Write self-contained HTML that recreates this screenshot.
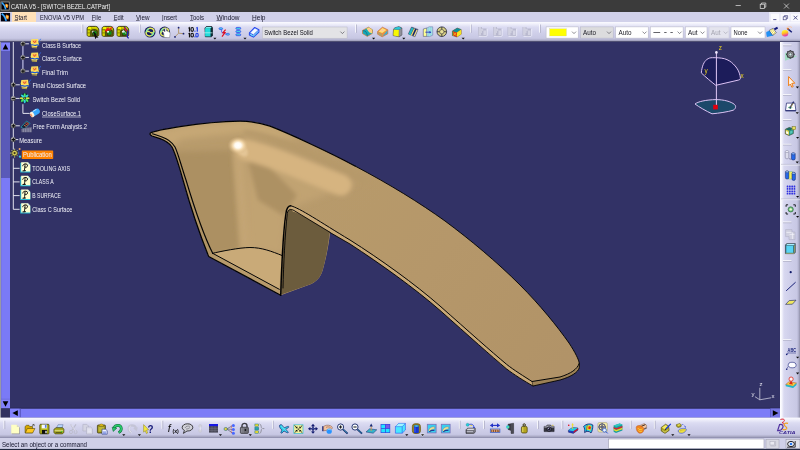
<!DOCTYPE html>
<html>
<head>
<meta charset="utf-8">
<title>CATIA V5 - [SWITCH BEZEL.CATPart]</title>
<style>
*{margin:0;padding:0}
html,body{width:800px;height:450px;overflow:hidden;background:#333366;font-family:"Liberation Sans",sans-serif}
svg{display:block;position:absolute;left:0;top:0}
text{font-family:"Liberation Sans",sans-serif;white-space:pre}
</style>
</head>
<body>
<svg width="800" height="450" viewBox="0 0 800 450">
<defs>
<filter id="soft" x="-2%" y="-2%" width="104%" height="104%"><feGaussianBlur stdDeviation="0.32"/></filter>
<linearGradient id="tbg" x1="0" y1="0" x2="0" y2="1"><stop offset="0" stop-color="#fbfbff"/><stop offset="0.1" stop-color="#f0f0fb"/><stop offset="0.26" stop-color="#dcdcf2"/><stop offset="0.5" stop-color="#d1d1eb"/><stop offset="0.84" stop-color="#c7c7e3"/><stop offset="0.93" stop-color="#b0b0cc"/><stop offset="1" stop-color="#9090a8"/></linearGradient>
<linearGradient id="rbg" x1="0" y1="0" x2="1" y2="0"><stop offset="0" stop-color="#ffffff"/><stop offset="0.08" stop-color="#f6f6fd"/><stop offset="0.2" stop-color="#d8d8f0"/><stop offset="0.5" stop-color="#cfcfea"/><stop offset="0.85" stop-color="#c8c8e4"/><stop offset="0.94" stop-color="#acacc8"/><stop offset="1" stop-color="#9090a8"/></linearGradient>
<linearGradient id="ybox" x1="0" y1="0" x2="0" y2="1"><stop offset="0" stop-color="#f4f400"/><stop offset="1" stop-color="#b4b400"/></linearGradient>
<linearGradient id="ball" x1="0.3" y1="0" x2="0.6" y2="1"><stop offset="0" stop-color="#ffff30"/><stop offset="0.45" stop-color="#ffc020"/><stop offset="0.75" stop-color="#f06080"/><stop offset="1" stop-color="#d820d0"/></linearGradient>
</defs>
<g filter="url(#soft)">
<rect x="0" y="0" width="800" height="12" fill="#3a3a3a"/>
<rect x="0" y="12" width="800" height="10.5" fill="#d1d1ea"/>
<rect x="769" y="12" width="31" height="10.5" fill="#ececf8"/>
<rect x="12" y="12" width="24" height="10" fill="#ffe1b8"/>
<rect x="0" y="22" width="800" height="19.4" fill="url(#tbg)"/>
<rect x="0" y="41.2" width="800" height="1" fill="#505070"/>
<rect x="0" y="42" width="780" height="367" fill="#333366"/>
<g id="model"><defs>
<filter id="bl3" x="-20%" y="-20%" width="140%" height="140%"><feGaussianBlur stdDeviation="3"/></filter>
<filter id="bl2" x="-20%" y="-20%" width="140%" height="140%"><feGaussianBlur stdDeviation="2.2"/></filter>
<filter id="bl1" x="-50%" y="-50%" width="200%" height="200%"><feGaussianBlur stdDeviation="1.2"/></filter>
<clipPath id="sil"><path d="M150.4,133 C153,131.5 170,128.2 180,126.6 C200,123.6 220,121.6 240,121.2 C252,121.2 262,123.2 270,126.2 C290,134 330,152.5 355,166 C390,184.5 420,203 445,221 C470,239.5 497,262 520,285 C540,305 557,326 569,343 C575,352 579,360 579.3,363.5 L579.3,367.8 C578,372 572,376.5 560,380 L533,386 C525,381.5 513,374 506.7,369 C490,355 470,337 440,310.4 C415,288.5 380,263.5 350,244 L330,232.5 C329,245 325,262 323.3,268 C321.5,275 319,280 311.3,284 L280.7,295.2 L208.7,256.5 C202,240 190,205 183,180 C179,166 176,155 172,147 C169,142.5 164,140 160,138.6 L152,136 C150,135 149.6,134 150.4,133 Z"/></clipPath>
<radialGradient id="hl" cx="0.5" cy="0.5" r="0.5"><stop offset="0" stop-color="#ffffff"/><stop offset="0.3" stop-color="#fffaf0"/><stop offset="0.55" stop-color="#f4d8aa" stop-opacity="0.9"/><stop offset="1" stop-color="#d2b07c" stop-opacity="0"/></radialGradient>
<linearGradient id="strip" gradientUnits="userSpaceOnUse" x1="300" y1="170" x2="560" y2="370"><stop offset="0" stop-color="#b89b6c"/><stop offset="0.5" stop-color="#b5976a"/><stop offset="1" stop-color="#b19367"/></linearGradient>
</defs>
<g clip-path="url(#sil)">
<rect x="140" y="110" width="450" height="290" fill="url(#strip)"/>
<g filter="url(#bl3)">
<!-- flange band lighter -->
<path d="M150,133 L180,126 L240,120.5 L266,123 L285,131 L300,141 L262,136 L240,133 L182,139 L172,146 Z" fill="#c6a775"/>
<!-- left wall -->
<path d="M170,152 L234,150 L240,250 L209,256 Z" fill="#ac9062"/>
<!-- back wall lighter -->
<path d="M246,150 L300,165 L357,183 L292,207 L285,216 L283,254 L246,250 Z" fill="#c1a372"/>
</g>
<g filter="url(#bl2)">
<!-- dark diagonal -->
<path d="M246,154 L258,156 L297,195 L288,209 L284,216 L258,200 Z" fill="#ad9164"/>
<!-- vertical fillet band -->
<path d="M238,150 L246,250" stroke="#c3a473" stroke-width="11" fill="none"/>
<!-- dark band under flange -->
<path d="M246,132.5 C262,134.5 280,141 300,149.5 C320,158.5 345,170.5 366,182" stroke="#b6996a" stroke-width="5" fill="none" stroke-linecap="round"/>
<!-- bright fillet band -->
<path d="M246,150 C259,153 279,160 300,168.5 C316,175 330,180.5 341,185" stroke="#d6b480" stroke-width="21" fill="none" stroke-linecap="round"/>
</g>
<!-- floor -->
<path d="M212.7,253.3 C220,251.5 240,247.5 250,247.5 C262,247.5 272,251.5 282,255.5 L279.3,289.3 Z" fill="#c9aa78"/>
<!-- thickness of left/bottom walls -->
<!-- dark side wall -->
<path d="M287.3,213.3 C288,209 291,208.8 294,210.5 L330,232 L329.2,236 C328,248 325,262 323.3,268 C321.5,275 319,280 311.3,284 L280.7,294.7 C281.5,270 283.5,235 287.3,213.3 Z" fill="#6c5b3d"/>
<!-- strip thickness band (side) -->
<path d="M290,205.9 C300,208 320,222 350,240 C380,259 415,284 440,306 C470,332.5 490,350.5 506.7,364.4 C513,369.5 525,377 532,381.5 L533,386 C525,381.5 513,374 506.7,369 C490,355 470,337 440,310.4 C415,288.5 380,263.5 350,244 C320,226 300,213 292.7,211.5 Z" fill="#c9a978"/>
<!-- tip front band -->
<path d="M532,381.5 L560,377 C571,373.5 577,369.5 579.2,363.5 L579.3,367.8 C578,372 572,376.5 560,380 L533,386 Z" fill="#9c8156"/>
<ellipse cx="241" cy="149" rx="9" ry="5" fill="#f0d4a8" opacity="0.55" transform="rotate(50 241 149)" filter="url(#bl1)"/><ellipse cx="238" cy="145.4" rx="10.5" ry="9" fill="url(#hl)"/>
</g>
<!-- outlines -->
<g fill="none" stroke="#050505" stroke-width="1" stroke-linejoin="round" stroke-linecap="round">
<path d="M280.7,295.2 L208.7,256.5 C202,240 190,205 183,180 C179,166 176,155 172,147 C169,142.5 164,140 160,138.6 L152,136 C150,135 149.6,134 150.4,133 C153,131.5 170,128.2 180,126.6 C200,123.6 220,121.6 240,121.2 C252,121.2 262,123.2 270,126.2 C290,134 330,152.5 355,166" stroke-width="1.25"/>
<path d="M355,166 C390,184.5 420,203 445,221 C470,239.5 497,262 520,285 C540,305 557,326 569,343 C575,352 579,360 579.3,363.5 L579.3,367.8 C578,372 572,376.5 560,380 L533,386 C525,381.5 513,374 506.7,369 C490,355 470,337 440,310.4 C415,288.5 380,263.5 350,244 L330,232.5" stroke-width="0.95"/>
<!-- inner left lip line -->
<path d="M152.5,133.8 C155,134.5 159,136 162,137 C166,138.3 171,140.5 175,147 C178,153 181,165 186,180 C192,200 204,236 212.7,253.3" stroke-width="1.15"/>
<!-- floor back edge -->
<path d="M212.7,253.3 C220,251.5 240,247.5 250,247.5 C262,247.5 272,251.5 282,255.5"/>
<!-- bottom inner edge -->
<path d="M212.7,253.3 L279.3,289.3"/>
<!-- right wall near-vertical lines -->
<path d="M280.7,295.2 C281.5,270 283,232 286,213 C286.6,208.5 288,206 290.5,205.7" stroke-width="1.5"/>
<path d="M283,288 C283.5,265 285,235 287.3,213.3 C288,209 291,208.8 294,210.5 L330,232.3" stroke-width="0.9"/>
<!-- strip top-face lower edge -->
<path d="M290.5,205.7 C300,208 320,222 350,240 C380,259 415,284 440,306 C470,332.5 490,350.5 506.7,364.4 C513,369.5 525,377 532,381.5 L560,377 C571,373.5 577,369.5 579.2,363.5"/>
<path d="M532,381.5 L533,386" stroke-width="0.5"/>
</g>
</g>
<rect x="0" y="41.8" width="1.1" height="376.2" fill="#9898a6"/>
<rect x="1.1" y="42.4" width="8.9" height="136" fill="#5a5ab8"/>
<rect x="1.1" y="42.6" width="8.9" height="8.2" fill="#8282fc"/>
<path d="M2.7,49.4 L8.3,49.4 L5.5,44 Z" fill="#000"/>
<rect x="1.1" y="178" width="8.9" height="221" fill="#7a7af6"/>
<rect x="1.1" y="399" width="8.9" height="9.3" fill="#8282fc"/>
<rect x="1.1" y="398.8" width="8.9" height="0.7" fill="#6464d0"/>
<path d="M2.7,401.2 L8.3,401.2 L5.5,406.8 Z" fill="#000"/>
<rect x="1.1" y="408.5" width="8.7" height="9.3" fill="#33335f"/>
<rect x="10" y="408.5" width="770" height="9.2" fill="#7b7bf7"/>
<rect x="10" y="407.7" width="770" height="0.8" fill="#2a2a58"/>
<rect x="10.2" y="408.7" width="9.4" height="8.8" fill="#8282fc"/>
<rect x="19.8" y="408.5" width="0.9" height="9.2" fill="#5252b4"/>
<path d="M17.8,410.2 L17.8,416 L12.4,413.1 Z" fill="#000"/>
<rect x="770.8" y="408.5" width="9.2" height="9.2" fill="#7474e4"/>
<rect x="770.2" y="408.5" width="0.8" height="9.2" fill="#5c5cc4"/>
<path d="M772.8,410.2 L772.8,416 L778.4,413.1 Z" fill="#000"/>
<rect x="780" y="42" width="20" height="376" fill="url(#rbg)"/>
<rect x="0" y="417.6" width="800" height="20" fill="url(#tbg)"/>
<rect x="0" y="437.6" width="800" height="12.4" fill="#d0d0e8"/>
<rect x="608.5" y="439" width="155.5" height="9.6" fill="#ffffff" stroke="#9a9aae" stroke-width="0.6"/>
<rect x="766" y="439.3" width="13" height="9" fill="#d8d8e2" stroke="#a0a0b0" stroke-width="0.5"/>
<rect x="786" y="439.3" width="14" height="9" fill="#e0e0ea" stroke="#8c8ca0" stroke-width="0.5"/>
<g font-family="Liberation Sans, sans-serif">
<text x="11" y="8.6" font-size="7.3" fill="#f2f2f2" textLength="99" lengthAdjust="spacingAndGlyphs" >CATIA V5 - [SWITCH BEZEL.CATPart]</text>
<text x="14.5" y="19.6" font-size="6.9" fill="#18182c" textLength="12.5" lengthAdjust="spacingAndGlyphs" >Start</text>
<rect x="14.5" y="20.5" width="3.4" height="0.5" fill="#18182c"/>
<text x="40" y="19.6" font-size="6.9" fill="#18182c" textLength="44" lengthAdjust="spacingAndGlyphs" >ENOVIA V5 VPM</text>
<text x="91.7" y="19.6" font-size="6.9" fill="#18182c" textLength="9.5" lengthAdjust="spacingAndGlyphs" >File</text>
<rect x="91.7" y="20.5" width="3.0" height="0.5" fill="#18182c"/>
<text x="113.7" y="19.6" font-size="6.9" fill="#18182c" textLength="10" lengthAdjust="spacingAndGlyphs" >Edit</text>
<rect x="113.7" y="20.5" width="3.2" height="0.5" fill="#18182c"/>
<text x="136" y="19.6" font-size="6.9" fill="#18182c" textLength="13.5" lengthAdjust="spacingAndGlyphs" >View</text>
<rect x="136" y="20.5" width="3.6" height="0.5" fill="#18182c"/>
<text x="162" y="19.6" font-size="6.9" fill="#18182c" textLength="15" lengthAdjust="spacingAndGlyphs" >Insert</text>
<rect x="162" y="20.5" width="1.2" height="0.5" fill="#18182c"/>
<text x="190" y="19.6" font-size="6.9" fill="#18182c" textLength="14" lengthAdjust="spacingAndGlyphs" >Tools</text>
<rect x="190" y="20.5" width="3.2" height="0.5" fill="#18182c"/>
<text x="216.5" y="19.6" font-size="6.9" fill="#18182c" textLength="23" lengthAdjust="spacingAndGlyphs" >Window</text>
<rect x="216.5" y="20.5" width="5.2" height="0.5" fill="#18182c"/>
<text x="252" y="19.6" font-size="6.9" fill="#18182c" textLength="13.5" lengthAdjust="spacingAndGlyphs" >Help</text>
<rect x="252" y="20.5" width="3.8" height="0.5" fill="#18182c"/>
<text x="2" y="446.6" font-size="6.6" fill="#15152c" textLength="85" lengthAdjust="spacingAndGlyphs" >Select an object or a command</text>
</g>
<g><rect x="1" y="2" width="8.2" height="8" fill="#060608" stroke="#c8c8c8" stroke-width="0.6"/><g transform="translate(1,2) scale(0.911111111111111,0.8888888888888888)">
<path d="M5.4,1.6 C6.4,2.4 7.6,2.2 8,3.4 C8.2,4.6 7.2,5.6 7.6,6.6 C6.4,6.8 5.2,6.2 4.6,5 C4.2,3.8 4.6,2.4 5.4,1.6 Z" fill="#f07818"/>
<path d="M5.6,2.6 C6.4,3 7,3.2 7.2,4 C7.2,4.8 6.6,5.4 6.4,6 C5.6,5.6 5.2,4.8 5.2,4 Z" fill="#ffd860"/>
<path d="M0.8,0.8 C2.6,2 4.2,4 5.2,8.4" stroke="#1c8cf0" stroke-width="1.7" fill="none"/>
<path d="M1.2,1 C2.8,2.2 4.2,4.2 5,7.6" stroke="#70d0ff" stroke-width="0.6" fill="none"/>
</g></g>
<g><rect x="0.8" y="13" width="9.3" height="8.4" fill="#060608"/><g transform="translate(0.8,13) scale(1.0333333333333334,0.9333333333333333)">
<path d="M5.4,1.6 C6.4,2.4 7.6,2.2 8,3.4 C8.2,4.6 7.2,5.6 7.6,6.6 C6.4,6.8 5.2,6.2 4.6,5 C4.2,3.8 4.6,2.4 5.4,1.6 Z" fill="#f07818"/>
<path d="M5.6,2.6 C6.4,3 7,3.2 7.2,4 C7.2,4.8 6.6,5.4 6.4,6 C5.6,5.6 5.2,4.8 5.2,4 Z" fill="#ffd860"/>
<path d="M0.8,0.8 C2.6,2 4.2,4 5.2,8.4" stroke="#1c8cf0" stroke-width="1.7" fill="none"/>
<path d="M1.2,1 C2.8,2.2 4.2,4.2 5,7.6" stroke="#70d0ff" stroke-width="0.6" fill="none"/>
</g></g>
<g stroke="#e8e8e8" stroke-width="0.7" fill="none">
<path d="M735.6,5.5 L740.8,5.5"/>
<rect x="760.2" y="4.2" width="4.3" height="4.3"/><path d="M761.5,4.2 L761.5,3 L765.8,3 L765.8,7.2 L764.5,7.2"/>
<path d="M784,3.6 L788.9,8.5 M788.9,3.6 L784,8.5"/>
</g>
<g stroke="#484884" stroke-width="0.7" fill="none">
<rect x="770.8" y="13.8" width="8.2" height="7.6" fill="#fafafe" stroke="none"/>
<rect x="780.8" y="13.8" width="8.6" height="7.6" fill="#fafafe" stroke="none"/>
<rect x="791" y="13.8" width="9" height="7.6" fill="#fafafe" stroke="none"/>
<path d="M773.2,19.6 L776.4,19.6" stroke-width="0.9"/>
<rect x="783.2" y="16.8" width="3" height="3"/><path d="M784.4,16.8 L784.4,15.6 L787.6,15.6 L787.6,18.6 L786.2,18.6"/>
<path d="M793.6,15.8 L797.4,19.6 M797.4,15.8 L793.6,19.6" stroke-width="0.9"/>
</g>
<g id="tree"><defs><radialGradient id="nodeg" cx="0.35" cy="0.3" r="0.8"><stop offset="0" stop-color="#c4c4c4"/><stop offset="0.6" stop-color="#7c7c7c"/><stop offset="1" stop-color="#3c3c3c"/></radialGradient></defs>
<path d="M13.3,42 L13.3,149.5" stroke="#f4f4fc" stroke-width="0.9" fill="none"/>
<path d="M22.9,42 L22.9,72.6" stroke="#b4b4dc" stroke-width="1.3" fill="none"/>
<path d="M13.3,158.5 L13.3,209.3 L19.6,209.3 M13.3,168.3 L19.6,168.3 M13.3,181.9 L19.6,181.9 M13.3,195.6 L19.6,195.6" stroke="#f4f4fc" stroke-width="0.9" fill="none"/>
<path d="M22.9,104.2 L22.9,113.4 L29.6,113.4" stroke="#f4f4fc" stroke-width="0.9" fill="none"/>
<path d="M22.9,43.8 L28.9,43.8" stroke="#f4f4fc" stroke-width="0.9"/><circle cx="22.9" cy="43.8" r="2.5" fill="url(#nodeg)"/><path d="M21.2,43.8 L24.599999999999998,43.8" stroke="#050505" stroke-width="1"/><path d="M22.9,42.099999999999994 L22.9,45.5" stroke="#050505" stroke-width="1"/>
<path d="M22.9,57.4 L28.9,57.4" stroke="#f4f4fc" stroke-width="0.9"/><circle cx="22.9" cy="57.4" r="2.5" fill="url(#nodeg)"/><path d="M21.2,57.4 L24.599999999999998,57.4" stroke="#050505" stroke-width="1"/><path d="M22.9,55.699999999999996 L22.9,59.1" stroke="#050505" stroke-width="1"/>
<path d="M22.9,71.1 L28.9,71.1" stroke="#f4f4fc" stroke-width="0.9"/><circle cx="22.9" cy="71.1" r="2.5" fill="url(#nodeg)"/><path d="M21.2,71.1 L24.599999999999998,71.1" stroke="#050505" stroke-width="1"/><path d="M22.9,69.39999999999999 L22.9,72.8" stroke="#050505" stroke-width="1"/>
<path d="M13.3,84.8 L19.8,84.8" stroke="#f4f4fc" stroke-width="0.9"/><circle cx="13.3" cy="84.8" r="2.5" fill="url(#nodeg)"/><path d="M11.600000000000001,84.8 L15.0,84.8" stroke="#050505" stroke-width="1"/><path d="M13.3,83.1 L13.3,86.5" stroke="#050505" stroke-width="1"/>
<path d="M13.3,98.4 L19.8,98.4" stroke="#f4f4fc" stroke-width="0.9"/><circle cx="13.3" cy="98.4" r="2.5" fill="url(#nodeg)"/><path d="M11.600000000000001,98.4 L15.0,98.4" stroke="#050505" stroke-width="1"/>
<path d="M13.3,125.8 L19.8,125.8" stroke="#f4f4fc" stroke-width="0.9"/><circle cx="13.3" cy="125.8" r="2.5" fill="url(#nodeg)"/><path d="M11.600000000000001,125.8 L15.0,125.8" stroke="#050505" stroke-width="1"/><path d="M13.3,124.1 L13.3,127.5" stroke="#050505" stroke-width="1"/>
<path d="M13.3,139.60000000000002 L18.3,139.60000000000002" stroke="#f4f4fc" stroke-width="0.9"/><circle cx="13.3" cy="139.60000000000002" r="2.5" fill="url(#nodeg)"/><path d="M11.600000000000001,139.60000000000002 L15.0,139.60000000000002" stroke="#050505" stroke-width="1"/><path d="M13.3,137.90000000000003 L13.3,141.3" stroke="#050505" stroke-width="1"/>
<g transform="translate(30.4,38.599999999999994)">
<path d="M1,0.6 L7.6,0.3 L8.4,5.6 L6.4,8.6 L1.2,8.2 L0.3,4 Z" fill="#ffe45c"/>
<path d="M1.8,1.4 L6.2,1.2 L6.8,4.2 L2.6,5 Z" fill="#f8b458" opacity="0.9"/>
<path d="M2.6,2.6 L4.4,3.8 M5.6,2 L4.2,4.4" stroke="#e03018" stroke-width="0.7"/>
<path d="M0.2,6.6 C2,5 3.6,7.6 5.4,6.6 C6.8,5.8 7.8,6.4 8.8,7" stroke="#1c58d0" stroke-width="1.2" fill="none"/>
<path d="M1.4,8.9 L6.6,9.3" stroke="#d8c040" stroke-width="0.8"/>
<path d="M8.6,3 L10.3,0.2 M8.6,3 L9.8,4.2" stroke="#2c6ce8" stroke-width="0.8" fill="none"/>
</g>
<g transform="translate(30.4,52.199999999999996)">
<path d="M1,0.6 L7.6,0.3 L8.4,5.6 L6.4,8.6 L1.2,8.2 L0.3,4 Z" fill="#ffe45c"/>
<path d="M1.8,1.4 L6.2,1.2 L6.8,4.2 L2.6,5 Z" fill="#f8b458" opacity="0.9"/>
<path d="M2.6,2.6 L4.4,3.8 M5.6,2 L4.2,4.4" stroke="#e03018" stroke-width="0.7"/>
<path d="M0.2,6.6 C2,5 3.6,7.6 5.4,6.6 C6.8,5.8 7.8,6.4 8.8,7" stroke="#1c58d0" stroke-width="1.2" fill="none"/>
<path d="M1.4,8.9 L6.6,9.3" stroke="#d8c040" stroke-width="0.8"/>
<path d="M8.6,3 L10.3,0.2 M8.6,3 L9.8,4.2" stroke="#2c6ce8" stroke-width="0.8" fill="none"/>
</g>
<g transform="translate(30.4,65.89999999999999)">
<path d="M1,0.6 L7.6,0.3 L8.4,5.6 L6.4,8.6 L1.2,8.2 L0.3,4 Z" fill="#ffe45c"/>
<path d="M1.8,1.4 L6.2,1.2 L6.8,4.2 L2.6,5 Z" fill="#f8b458" opacity="0.9"/>
<path d="M2.6,2.6 L4.4,3.8 M5.6,2 L4.2,4.4" stroke="#e03018" stroke-width="0.7"/>
<path d="M0.2,6.6 C2,5 3.6,7.6 5.4,6.6 C6.8,5.8 7.8,6.4 8.8,7" stroke="#1c58d0" stroke-width="1.2" fill="none"/>
<path d="M1.4,8.9 L6.6,9.3" stroke="#d8c040" stroke-width="0.8"/>
<path d="M8.6,3 L10.3,0.2 M8.6,3 L9.8,4.2" stroke="#2c6ce8" stroke-width="0.8" fill="none"/>
</g>
<g transform="translate(20.4,79.39999999999999)">
<path d="M1,0.6 L7.6,0.3 L8.4,5.6 L6.4,8.6 L1.2,8.2 L0.3,4 Z" fill="#ffe45c"/>
<path d="M1.8,1.4 L6.2,1.2 L6.8,4.2 L2.6,5 Z" fill="#f8b458" opacity="0.9"/>
<path d="M2.6,2.6 L4.4,3.8 M5.6,2 L4.2,4.4" stroke="#e03018" stroke-width="0.7"/>
<path d="M0.2,6.6 C2,5 3.6,7.6 5.4,6.6 C6.8,5.8 7.8,6.4 8.8,7" stroke="#1c58d0" stroke-width="1.2" fill="none"/>
<path d="M1.4,8.9 L6.6,9.3" stroke="#d8c040" stroke-width="0.8"/>
<path d="M8.6,3 L10.3,0.2 M8.6,3 L9.8,4.2" stroke="#2c6ce8" stroke-width="0.8" fill="none"/>
</g>
<g transform="translate(24.7,98.2)"><circle r="4.9" fill="#0c2c30"/><ellipse cx="0" cy="-3" rx="1.05" ry="2" fill="#48e860" transform="rotate(0)"/><ellipse cx="0" cy="-3" rx="1.05" ry="2" fill="#30d0e0" transform="rotate(45)"/><ellipse cx="0" cy="-3" rx="1.05" ry="2" fill="#d4e444" transform="rotate(90)"/><ellipse cx="0" cy="-3" rx="1.05" ry="2" fill="#48e860" transform="rotate(135)"/><ellipse cx="0" cy="-3" rx="1.05" ry="2" fill="#30d0e0" transform="rotate(180)"/><ellipse cx="0" cy="-3" rx="1.05" ry="2" fill="#48e860" transform="rotate(225)"/><ellipse cx="0" cy="-3" rx="1.05" ry="2" fill="#d4e444" transform="rotate(270)"/><ellipse cx="0" cy="-3" rx="1.05" ry="2" fill="#30d0e0" transform="rotate(315)"/><circle r="1.2" fill="#283c20"/><circle r="0.6" fill="#e8d040"/></g>
<g transform="translate(35,112.7) rotate(-32)">
<rect x="-5.2" y="-2.7" width="10.4" height="5.4" rx="2.7" fill="#38a8ff"/>
<rect x="-5.2" y="-2.7" width="3.6" height="5.4" rx="1.6" fill="#fff4e0"/>
<rect x="-5.4" y="-1.4" width="1.6" height="3.2" fill="#f09060"/>
<path d="M-1,-2.2 L3,-2.2" stroke="#b8e0ff" stroke-width="0.9"/>
</g>
<g transform="translate(20.3,120.69999999999999)">
<path d="M0.6,6.4 L6.2,0.4 L9.8,2.6 L4.2,8.4 Z" fill="#18283c" stroke="#28b8c8" stroke-width="0.6"/>
<path d="M5,3 L7.6,4.6 M6.2,1.8 L8.6,3.4" stroke="#e84830" stroke-width="1"/>
<path d="M3.6,4.4 L6.2,6" stroke="#f08040" stroke-width="0.8"/>
<path d="M1,8.4 C3,7.2 8,6.8 11.6,6.6 L11.6,11.6 L1.2,11.6 Z" fill="#70708c" opacity="0.9"/>
<path d="M3,8.4 L3,11.4 M5.4,8 L5.4,11.4 M7.8,7.6 L7.8,11.4 M10,7.4 L10,11.4" stroke="#a8a8c4" stroke-width="0.6"/>
</g>
<g transform="translate(14.6,153.1)">
<g stroke="#d0d08c" stroke-width="1"><path d="M-4.4,0 L4.4,0 M0,-4.4 L0,4.4 M-3.1,-3.1 L3.1,3.1 M-3.1,3.1 L3.1,-3.1"/></g>
<circle r="2.9" fill="#d4cc58" stroke="#38381c" stroke-width="0.8"/>
<circle r="1.1" fill="#403820"/>
<circle cx="5" cy="-4" r="1" fill="#f0a868"/>
<circle cx="5.4" cy="3.6" r="1.1" fill="#30d8f0"/>
<path d="M3,-2.2 C4.6,-1.4 4.6,1.2 3,2" stroke="#2848b8" stroke-width="0.8" fill="none"/>
</g>
<rect x="21.8" y="150.60" width="31.4" height="8.4" rx="0.8" fill="#ff8205"/>
<g transform="translate(20.3,162.20000000000002)">
<path d="M0,0.6 L0,10.4 L10,10.4 L10,3.4 L7.4,0.6 Z" fill="#22bcd8"/>
<path d="M0.9,0 L0.9,9.4 L10,9.4 L10,2.6 L7.6,0 Z" fill="#ffffd0"/>
<path d="M7.6,0 L7.6,2.6 L10,2.6 Z" fill="#c8e8e8"/>
<path d="M3.9,8.6 C4.6,6 4.9,4 4.6,2.2 M2.4,3.6 C2.4,1.4 6.8,0.8 7.2,3 C7.5,5 5,5.6 4.3,4.9 M2.6,8.7 L5.2,8.5" stroke="#101010" stroke-width="1" fill="none" stroke-linecap="round"/>
</g>
<g transform="translate(20.3,175.8)">
<path d="M0,0.6 L0,10.4 L10,10.4 L10,3.4 L7.4,0.6 Z" fill="#22bcd8"/>
<path d="M0.9,0 L0.9,9.4 L10,9.4 L10,2.6 L7.6,0 Z" fill="#ffffd0"/>
<path d="M7.6,0 L7.6,2.6 L10,2.6 Z" fill="#c8e8e8"/>
<path d="M3.9,8.6 C4.6,6 4.9,4 4.6,2.2 M2.4,3.6 C2.4,1.4 6.8,0.8 7.2,3 C7.5,5 5,5.6 4.3,4.9 M2.6,8.7 L5.2,8.5" stroke="#101010" stroke-width="1" fill="none" stroke-linecap="round"/>
</g>
<g transform="translate(20.3,189.5)">
<path d="M0,0.6 L0,10.4 L10,10.4 L10,3.4 L7.4,0.6 Z" fill="#22bcd8"/>
<path d="M0.9,0 L0.9,9.4 L10,9.4 L10,2.6 L7.6,0 Z" fill="#ffffd0"/>
<path d="M7.6,0 L7.6,2.6 L10,2.6 Z" fill="#c8e8e8"/>
<path d="M3.9,8.6 C4.6,6 4.9,4 4.6,2.2 M2.4,3.6 C2.4,1.4 6.8,0.8 7.2,3 C7.5,5 5,5.6 4.3,4.9 M2.6,8.7 L5.2,8.5" stroke="#101010" stroke-width="1" fill="none" stroke-linecap="round"/>
</g>
<g transform="translate(20.3,203.20000000000002)">
<path d="M0,0.6 L0,10.4 L10,10.4 L10,3.4 L7.4,0.6 Z" fill="#22bcd8"/>
<path d="M0.9,0 L0.9,9.4 L10,9.4 L10,2.6 L7.6,0 Z" fill="#ffffd0"/>
<path d="M7.6,0 L7.6,2.6 L10,2.6 Z" fill="#c8e8e8"/>
<path d="M3.9,8.6 C4.6,6 4.9,4 4.6,2.2 M2.4,3.6 C2.4,1.4 6.8,0.8 7.2,3 C7.5,5 5,5.6 4.3,4.9 M2.6,8.7 L5.2,8.5" stroke="#101010" stroke-width="1" fill="none" stroke-linecap="round"/>
</g>
<text x="42" y="47.60" font-size="6.4" fill="#f2f2fa" textLength="39" lengthAdjust="spacingAndGlyphs" >Class B Surface</text>
<text x="42" y="61.20" font-size="6.4" fill="#f2f2fa" textLength="39.7" lengthAdjust="spacingAndGlyphs" >Class C Surface</text>
<text x="42" y="74.90" font-size="6.4" fill="#f2f2fa" textLength="26" lengthAdjust="spacingAndGlyphs" >Final Trim</text>
<text x="32.5" y="88.40" font-size="6.4" fill="#f2f2fa" textLength="53.5" lengthAdjust="spacingAndGlyphs" >Final Closed Surface</text>
<text x="32.5" y="102.00" font-size="6.4" fill="#f2f2fa" textLength="47.5" lengthAdjust="spacingAndGlyphs" >Switch Bezel Solid</text>
<text x="42" y="115.70" font-size="6.4" fill="#f2f2fa" textLength="39" lengthAdjust="spacingAndGlyphs" >CloseSurface.1</text>
<text x="33" y="129.40" font-size="6.4" fill="#f2f2fa" textLength="54" lengthAdjust="spacingAndGlyphs" >Free Form Analysis.2</text>
<text x="19.2" y="143.10" font-size="6.4" fill="#f2f2fa" textLength="22.8" lengthAdjust="spacingAndGlyphs" >Measure</text>
<text x="23" y="156.80" font-size="6.4" fill="#f2f2fa" textLength="28.8" lengthAdjust="spacingAndGlyphs" >Publication</text>
<text x="32.3" y="170.60" font-size="6.4" fill="#f2f2fa" textLength="37.7" lengthAdjust="spacingAndGlyphs" >TOOLING AXIS</text>
<text x="32.3" y="184.20" font-size="6.4" fill="#f2f2fa" textLength="21.4" lengthAdjust="spacingAndGlyphs" >CLASS A</text>
<text x="32.3" y="197.90" font-size="6.4" fill="#f2f2fa" textLength="28.7" lengthAdjust="spacingAndGlyphs" >B SURFACE</text>
<text x="32.3" y="211.60" font-size="6.4" fill="#f2f2fa" textLength="40" lengthAdjust="spacingAndGlyphs" >Class C Surface</text>
<rect x="42" y="116.70" width="39" height="0.6" fill="#f2f2fa"/>
</g>
<g id="compass" font-family="Liberation Sans, sans-serif">
<path d="M695,104 C698,101.6 706,99.8 716,99.6 C724,99.6 731,101.6 734.4,104.4 C736.6,106.2 735.6,108.8 733.3,110.2 C727,112 719,113.2 712,113.8 C706,111 699,107 695,104 Z" fill="#1c4a6a" stroke="#dcc2f4" stroke-width="1"/>
<path d="M701.3,72.9 C702,66 704,61.6 706.7,59.6 C708.6,58.2 710.4,57.6 712.4,57.7 C716,57.6 720.4,57.8 724.4,58.7 C728,59.8 731,61.6 733.3,64 C736,66.6 738,69.6 738.9,72 C739.8,74.6 740.4,76.6 740.4,78.4 C740.2,79.4 739.6,79.8 738.7,80 L715.8,85.3 C711,81.6 705.6,77 701.3,72.9 Z" fill="#1b1b5a" stroke="#dcc2f4" stroke-width="1" stroke-linejoin="round"/>
<path d="M716.4,52.6 L716.4,105.6" stroke="#e0c8f6" stroke-width="1"/>
<circle cx="716.4" cy="52.4" r="1.3" fill="#f0e8ff"/>
<rect x="713.2" y="104.8" width="4.6" height="4.6" fill="#e40010"/>
<text x="718.8" y="49.8" font-size="6.4" fill="#e8d020">z</text>
<text x="704.6" y="73.4" font-size="6.4" fill="#e8d020">y</text>
<text x="740.6" y="78.2" font-size="6.4" fill="#e8d020">x</text>
</g>
<g id="axis" font-family="Liberation Sans, sans-serif" stroke="#dcdcec" stroke-width="0.7" fill="none">
<path d="M759.8,387.8 L759.8,399.8 L771,397.8 M759.8,399.8 L755,396.7"/>
<text x="759.6" y="386.4" font-size="6" fill="#e4e4f0" stroke="none">z</text>
<text x="771.6" y="397.6" font-size="6" fill="#e4e4f0" stroke="none">x</text>
<text x="751.6" y="396" font-size="6" fill="#e4e4f0" stroke="none">y</text>
</g>

<g id="toptb" font-family="Liberation Sans, sans-serif">
<path d="M82,24.2 L82,32.6" stroke="#ffffff" stroke-width="0.9"/><path d="M82.8,24.5 L82.8,32.9" stroke="#a8a8c0" stroke-width="0.7"/>
<path d="M139.5,24.2 L139.5,32.6" stroke="#ffffff" stroke-width="0.9"/><path d="M140.3,24.5 L140.3,32.9" stroke="#a8a8c0" stroke-width="0.7"/>
<path d="M355.7,24.2 L355.7,32.6" stroke="#ffffff" stroke-width="0.9"/><path d="M356.5,24.5 L356.5,32.9" stroke="#a8a8c0" stroke-width="0.7"/>
<path d="M470.5,24.2 L470.5,32.6" stroke="#ffffff" stroke-width="0.9"/><path d="M471.3,24.5 L471.3,32.9" stroke="#a8a8c0" stroke-width="0.7"/>
<path d="M539.7,24.2 L539.7,32.6" stroke="#ffffff" stroke-width="0.9"/><path d="M540.5,24.5 L540.5,32.9" stroke="#a8a8c0" stroke-width="0.7"/>
<g transform="translate(87.1,26.1)">
<path d="M2.4,0.3 L8.6,0.3 C10.6,0.6 11.7,2.2 11.7,4 L11.7,8.6 C11.7,9.6 11,10.2 10,10.2 L1.6,10.2 C0.6,10.2 0,9.6 0,8.6 L0,2.6 C0,1.2 1.2,0.3 2.4,0.3 Z" fill="#b8b800" stroke="#38380a" stroke-width="0.9"/>
<path d="M0.9,1.6 C1.4,0.9 3.4,0.8 4,1 L4,2.8 L0.9,3.2 Z" fill="#f4f400"/>
<path d="M4.6,0.9 L8.2,0.9 C9.4,1.1 10.2,1.7 10.6,2.6 L4.6,2 Z" fill="#d8d800"/>
<path d="M0.7,4 L2.6,4 L2.6,9.6 L0.7,9.6 Z" fill="#d4d400"/>
<path d="M0.4,3.7 L3,3.7 M0.5,6.8 L2.8,6.8" stroke="#505008" stroke-width="0.6"/>
<path d="M3.1,10 L3.1,5.6 C3.1,1.9 10.9,1.9 10.9,5.6 L10.9,10 Z" fill="#3c3c0c"/>
<path d="M4.2,10 L4.2,6 C4.2,3.2 9.8,3.2 9.8,6 L9.8,10" fill="none" stroke="#6c6c14" stroke-width="0.8"/>
<circle cx="7.5" cy="7" r="2.15" fill="#10901c"/>
<circle cx="6" cy="5.6" r="1.05" fill="#f6fff6"/>
</g>
<g transform="translate(102,26.1)">
<path d="M2.4,0.3 L8.6,0.3 C10.6,0.6 11.7,2.2 11.7,4 L11.7,8.6 C11.7,9.6 11,10.2 10,10.2 L1.6,10.2 C0.6,10.2 0,9.6 0,8.6 L0,2.6 C0,1.2 1.2,0.3 2.4,0.3 Z" fill="#b8b800" stroke="#38380a" stroke-width="0.9"/>
<path d="M0.9,1.6 C1.4,0.9 3.4,0.8 4,1 L4,2.8 L0.9,3.2 Z" fill="#f4f400"/>
<path d="M4.6,0.9 L8.2,0.9 C9.4,1.1 10.2,1.7 10.6,2.6 L4.6,2 Z" fill="#d8d800"/>
<path d="M0.7,4 L2.6,4 L2.6,9.6 L0.7,9.6 Z" fill="#d4d400"/>
<path d="M0.4,3.7 L3,3.7 M0.5,6.8 L2.8,6.8" stroke="#505008" stroke-width="0.6"/>
<path d="M3.1,10 L3.1,5.6 C3.1,1.9 10.9,1.9 10.9,5.6 L10.9,10 Z" fill="#3c3c0c"/>
<path d="M4.2,10 L4.2,6 C4.2,3.2 9.8,3.2 9.8,6 L9.8,10" fill="none" stroke="#6c6c14" stroke-width="0.8"/>
<circle cx="7.5" cy="7" r="2.15" fill="#10901c"/>
<circle cx="6" cy="5.6" r="1.05" fill="#f6fff6"/>
</g>
<g transform="translate(117,26.1)">
<path d="M2.4,0.3 L8.6,0.3 C10.6,0.6 11.7,2.2 11.7,4 L11.7,8.6 C11.7,9.6 11,10.2 10,10.2 L1.6,10.2 C0.6,10.2 0,9.6 0,8.6 L0,2.6 C0,1.2 1.2,0.3 2.4,0.3 Z" fill="#b8b800" stroke="#38380a" stroke-width="0.9"/>
<path d="M0.9,1.6 C1.4,0.9 3.4,0.8 4,1 L4,2.8 L0.9,3.2 Z" fill="#f4f400"/>
<path d="M4.6,0.9 L8.2,0.9 C9.4,1.1 10.2,1.7 10.6,2.6 L4.6,2 Z" fill="#d8d800"/>
<path d="M0.7,4 L2.6,4 L2.6,9.6 L0.7,9.6 Z" fill="#d4d400"/>
<path d="M0.4,3.7 L3,3.7 M0.5,6.8 L2.8,6.8" stroke="#505008" stroke-width="0.6"/>
<path d="M3.1,10 L3.1,5.6 C3.1,1.9 10.9,1.9 10.9,5.6 L10.9,10 Z" fill="#3c3c0c"/>
<path d="M4.2,10 L4.2,6 C4.2,3.2 9.8,3.2 9.8,6 L9.8,10" fill="none" stroke="#6c6c14" stroke-width="0.8"/>
<circle cx="7.5" cy="7" r="2.15" fill="#10901c"/>
<circle cx="6" cy="5.6" r="1.05" fill="#f6fff6"/>
</g>
<path d="M93.6,33 L98.6,37.8 L96.4,37.6 L95.4,39.2 Z" fill="#080808"/><path d="M93,31.6 L96,34.6" stroke="#080808" stroke-width="1.2"/>
<path d="M104.8,30.4 L108.4,27 L108.8,29 L113.4,26.2 L109.6,31 L109,29.4 L106.4,31.8 Z" fill="#f01818"/>
<path d="M124.2,27 L128,31.6 L127.2,36.6 L128.6,38.4" stroke="#2020b0" stroke-width="1.3" fill="none"/><path d="M124,27.6 L127.2,31.4" stroke="#e82020" stroke-width="1.3"/><path d="M123,29.6 L125.8,33.6" stroke="#d0d0e8" stroke-width="1"/>
<g transform="translate(150,32.1)">
<circle r="5.5" fill="#141c60"/>
<path d="M-3.7,0.6 C-3.7,-2.2 -1.6,-3.8 0.5,-3.8 C2.6,-3.8 4,-2.5 3.9,-0.9 C3.6,0.9 1.8,1.3 0.7,0.3" stroke="#e4e85c" stroke-width="1.45" fill="none" stroke-linecap="round"/>
<path d="M3.7,-0.6 C3.7,2.2 1.6,3.8 -0.5,3.8 C-2.6,3.8 -4,2.5 -3.9,0.9 C-3.6,-0.9 -1.8,-1.3 -0.7,-0.3" stroke="#e4e85c" stroke-width="1.45" fill="none" stroke-linecap="round"/>
<path d="M-3.7,0.3 C-3.6,-1.7 -2.5,-3 -1,-3.6" stroke="#7cecb0" stroke-width="1.2" fill="none"/>
<path d="M3.7,-0.3 C3.6,1.7 2.5,3 1,3.6" stroke="#7cecb0" stroke-width="1.2" fill="none"/>
</g>
<g transform="translate(164.6,32.1)">
<circle r="5.5" fill="#141c60"/>
<path d="M-3.7,0.6 C-3.7,-2.2 -1.6,-3.8 0.5,-3.8 C2.6,-3.8 4,-2.5 3.9,-0.9 C3.6,0.9 1.8,1.3 0.7,0.3" stroke="#e4e85c" stroke-width="1.45" fill="none" stroke-linecap="round"/>
<path d="M3.7,-0.6 C3.7,2.2 1.6,3.8 -0.5,3.8 C-2.6,3.8 -4,2.5 -3.9,0.9 C-3.6,-0.9 -1.8,-1.3 -0.7,-0.3" stroke="#e4e85c" stroke-width="1.45" fill="none" stroke-linecap="round"/>
<path d="M-3.7,0.3 C-3.6,-1.7 -2.5,-3 -1,-3.6" stroke="#7cecb0" stroke-width="1.2" fill="none"/>
<path d="M3.7,-0.3 C3.6,1.7 2.5,3 1,3.6" stroke="#7cecb0" stroke-width="1.2" fill="none"/>
</g>
<path d="M164.2,37.6 L163.6,33 L162.6,31.4 L163.6,30.6 L165,32 L165,28.6 C165,27.6 166.4,27.6 166.4,28.6 L166.6,31 L169,31.8 C170,32.2 170.2,33 170,34.4 L169.6,37.6 Z" fill="#ffffff" stroke="#707078" stroke-width="0.5"/>
<g stroke="#b09466" stroke-width="0.9" fill="none"><path d="M178.6,27.8 L178.6,33.2 L183.4,33.7 M178.6,33.2 L175,36.8"/></g><circle cx="178.6" cy="27.7" r="0.9" fill="#182070"/><circle cx="183.5" cy="33.7" r="0.9" fill="#182070"/><circle cx="175" cy="36.9" r="0.9" fill="#182070"/>
<rect x="188.9" y="27.2" width="1.2" height="4.5" fill="#101010"/><path d="M188.1,28.4 L189.4,27.2" stroke="#101010" stroke-width="0.7"/><ellipse cx="192.2" cy="29.45" rx="1.25" ry="1.9" fill="none" stroke="#101010" stroke-width="1.1"/><rect x="194.4" y="30.599999999999998" width="1.1" height="1.1" fill="#1838e0"/><rect x="196.7" y="27.2" width="1.2" height="4.5" fill="#1838e0"/><path d="M195.9,28.4 L197.2,27.2" stroke="#1838e0" stroke-width="0.7"/>
<rect x="188.9" y="32.9" width="1.2" height="4.5" fill="#101010"/><path d="M188.1,34.1 L189.4,32.9" stroke="#101010" stroke-width="0.7"/><ellipse cx="192.2" cy="35.15" rx="1.25" ry="1.9" fill="none" stroke="#101010" stroke-width="1.1"/><rect x="194.4" y="36.3" width="1.1" height="1.1" fill="#1838e0"/><ellipse cx="197" cy="35.15" rx="1.2" ry="1.9" fill="none" stroke="#1838e0" stroke-width="1.1"/>
<g transform="translate(203.7,26.4)">
<path d="M1.2,1.6 L2.6,0.2 L8.2,0.2 L8.8,1.6 L8.8,9.4 L7.6,10.4 L1.6,10.4 Z" fill="#103840" stroke="#081418" stroke-width="0.6"/>
<path d="M1.4,1.8 L7,1.8 L7,10 L1.4,10 Z" fill="#20dcdc"/>
<path d="M2.6,0.6 L8,0.6 L7,1.8 L1.4,1.8 Z" fill="#70f0f0"/>
<path d="M7,1.8 L8.6,1 L8.6,9 L7,10 Z" fill="#0c2c34"/>
<path d="M-0.8,6.4 L8.8,6.4" stroke="#c8f4f4" stroke-width="0.7"/>
</g>
<path d="M213.3,37.7 L216.5,37.7 L214.9,39.5 Z" fill="#101010"/>
<g transform="translate(218.6,26)" fill="none">
<rect x="0.4" y="1.8" width="3.6" height="1.7" rx="0.8" stroke="#2848f0" stroke-width="0.7" fill="#50e0e8"/>
<rect x="7.6" y="7.4" width="3.2" height="1.7" rx="0.8" stroke="#2848f0" stroke-width="0.7" fill="#50e0e8"/>
<path d="M2.6,3.4 L3.2,6.4 L7.6,8.2" stroke="#2848f0" stroke-width="0.7"/>
<path d="M7,3.6 L4.4,6.6 L6.4,6.6 L3.4,10.6" stroke="#e01020" stroke-width="1.2"/>
</g>
<g transform="translate(235.7,27.2)" stroke="#3048f0" stroke-width="0.8" fill="#48e0e0">
<rect x="0.2" y="0.2" width="4.8" height="1.9" rx="0.9"/>
<rect x="0.2" y="3.4" width="4.8" height="1.9" rx="0.9"/>
<rect x="0.2" y="6.6" width="4.8" height="1.9" rx="0.9"/>
</g>
<path d="M243.4,37.7 L246.6,37.7 L245.0,39.5 Z" fill="#101010"/>
<g transform="translate(248.7,26.8)">
<path d="M0.7,6 L6,0.7 L10.2,3 L10.2,5.2 L4.8,10.3 L0.7,8.2 Z" fill="#d8ecff" stroke="#2848f0" stroke-width="1.1" stroke-linejoin="round"/>
<path d="M0.7,6 L4.8,8.2 L10.2,3" stroke="#2848f0" stroke-width="0.9" fill="none"/>
<path d="M1.2,7 L4.8,8.9 L9.7,4.1 L9.7,5 L4.8,9.7 L1.2,7.8 Z" fill="#38dce8"/>
<path d="M2.6,5.8 L6,2.2 L8.2,3.4 L4.8,6.9 Z" fill="#f8fcff"/>
</g>
<rect x="262.3" y="27" width="84.8" height="11.2" fill="#e3e3e6" stroke="#b8b8c4" stroke-width="0.5"/>
<text x="264.2" y="34.90" font-size="6.5" fill="#101018" textLength="48.6" lengthAdjust="spacingAndGlyphs" >Switch Bezel Solid</text>
<path d="M340.4,31.6 L342.4,33.6 L344.4,31.6" stroke="#404048" stroke-width="0.6" fill="none"/>
<g transform="translate(361.9,26.8)">
<path d="M0.6,3.6 L6.6,0.4 L10.6,3 L10.4,6.6 L5.4,9.6 L0.6,6.8 Z" fill="#18a8b8" stroke="#d87830" stroke-width="0.7" stroke-linejoin="round"/>
<path d="M4.6,2 L7,0.8 L10.2,3 L10,6.4 L7.4,5.6 Z" fill="#ffe070"/>
<path d="M5.4,2.4 L8,2 L9.6,4.6 L7.6,5.2 Z" fill="#ffc0a0"/>
<path d="M0.8,4 C3,3.6 5,5 5.4,9" stroke="#0c5868" stroke-width="0.6" fill="none"/>
</g>
<path d="M372,37.7 L375.2,37.7 L373.6,39.5 Z" fill="#101010"/>
<g transform="translate(377,26.8)">
<path d="M0.6,4.6 L5.4,0.4 L10.8,3 L10.8,7 L5.2,10 L0.6,7.4 Z" fill="#e89048" stroke="#c86830" stroke-width="0.6" stroke-linejoin="round"/>
<path d="M1.6,4.6 L5.4,1.2 L9.4,3.2 L5.2,6.2 Z" fill="#ffe868"/>
<path d="M3,4.2 L5.4,2.2 L7.6,3.4 L5.2,5 Z" fill="#ffc8a0"/>
<path d="M5.4,9.4 L10.4,3.8 L10.4,6.8 Z" fill="#28b0e0"/>
<path d="M0.8,5.4 L5,7.2 L5,9.6 L0.8,7.2 Z" fill="#b0a068"/>
</g>
<g transform="translate(392.5,26.4)">
<path d="M2.2,1.4 L6.4,0.2 L9.4,1.6 L9.4,8.6 L6.6,10.4 L0.6,9.2 L1,3 Z" fill="#606068" stroke="#303038" stroke-width="0.5"/>
<path d="M1.2,3 L6.4,3.6 L6.2,10 L0.8,9 Z" fill="#f8f800"/>
<path d="M2.4,1.4 L6.4,0.4 L9,1.8 L6.4,3.4 L1.4,2.8 Z" fill="#28c8d8"/>
<path d="M6.6,3.6 L9.2,2 L9.2,8.4 L6.6,10 Z" fill="#909098"/>
</g>
<path d="M402.2,37.7 L405.4,37.7 L403.8,39.5 Z" fill="#101010"/>
<g transform="translate(407.9,26.6)">
<path d="M3.6,0.4 L10.2,2.8 L7,10.2 L0.4,7.4 Z" fill="#182468" stroke="#505868" stroke-width="0.5"/>
<path d="M3.6,0.8 L5.8,1.6 L2.6,8.6 L0.6,7.4 Z" fill="#28b8c0"/>
<path d="M6,1.8 L7.2,2.2 L4,9.2 L2.8,8.6 Z" fill="#f0e070"/>
<path d="M8.6,3 L9.8,3.4 L6.8,10 L5.6,9.4 Z" fill="#e8d890"/>
</g>
<g transform="translate(422.3,26.4)">
<path d="M1,2.6 L4.6,1.6 L4.6,10 L1,10 Z" fill="#ffff90" stroke="#303878" stroke-width="0.5"/>
<path d="M4.6,1.6 L7,0.4 L10.4,0.4 L10.4,8.8 L7.2,10.2 L4.6,10 Z" fill="#b8ecf0" stroke="#5868a0" stroke-width="0.5"/>
<path d="M6.6,1 L6.6,9.6 M8.6,0.6 L8.6,9.2" stroke="#58b8c8" stroke-width="0.6"/>
<path d="M3,5.8 L8,5.8" stroke="#2030c0" stroke-width="0.8"/><path d="M7.2,4.6 L9,5.8 L7.2,7 Z" fill="#2030c0"/>
</g>
<g transform="translate(441.8,31.7)">
<circle r="4.8" fill="#d8d084" stroke="#282838" stroke-width="0.8"/>
<circle r="2.2" fill="#e8e098" stroke="#383840" stroke-width="0.6"/>
<path d="M-4.8,0 L-2.2,0 M2.2,0 L4.8,0 M0,-4.8 L0,-2.2 M0,2.2 L0,4.8" stroke="#282838" stroke-width="0.8"/>
</g>
<g transform="translate(452,27.6)">
<path d="M0.4,3.4 L5.2,0.4 L9.2,2 L9.2,6.6 L5,9.4 L0.4,8 Z" fill="#e84010" stroke="#383020" stroke-width="0.4"/>
<path d="M0.4,3.4 L5.2,0.4 L9.2,2 L5,4.8 Z" fill="#109098"/>
<path d="M5,4.8 L9.2,2 L9.2,6.6 L5,9.4 Z" fill="#f0e820"/>
<path d="M1.4,5 L4.2,8 M4.2,5.2 L1.4,7.8" stroke="#f0c020" stroke-width="0.8"/>
<path d="M0.6,4 L0.6,8" stroke="#30b040" stroke-width="0.7"/>
</g>
<path d="M461.6,37.7 L464.8,37.7 L463.20000000000005,39.5 Z" fill="#101010"/>
<g transform="translate(477,26)" opacity="0.95">
<path d="M1,1 L5,1 L5,2.6 L9.6,2.6 L9.6,9.6 C8,11 4.6,11 3.4,9.6 L1,9.6 Z" fill="#b8b8ce"/>
<path d="M1.6,2 L4.2,2 M1.6,4 L6.2,4 M1.6,6 L5,6 M1.6,8 L4,8" stroke="#f6f6fc" stroke-width="0.8"/>
<path d="M6.4,4.4 L9,4.4 L9,9 L6.4,9 Z" fill="#d4d4e4"/>
<path d="M2,10.4 L9.8,10.4 M10.2,3 L10.2,10" stroke="#f8f8ff" stroke-width="0.6"/>
</g>
<g transform="translate(492,26)" opacity="0.95">
<path d="M1,1 L5,1 L5,2.6 L9.6,2.6 L9.6,9.6 C8,11 4.6,11 3.4,9.6 L1,9.6 Z" fill="#b8b8ce"/>
<path d="M1.6,2 L4.2,2 M1.6,4 L6.2,4 M1.6,6 L5,6 M1.6,8 L4,8" stroke="#f6f6fc" stroke-width="0.8"/>
<path d="M6.4,4.4 L9,4.4 L9,9 L6.4,9 Z" fill="#d4d4e4"/>
<path d="M2,10.4 L9.8,10.4 M10.2,3 L10.2,10" stroke="#f8f8ff" stroke-width="0.6"/>
</g>
<g transform="translate(506.5,26)" opacity="0.95">
<path d="M1,1 L5,1 L5,2.6 L9.6,2.6 L9.6,9.6 C8,11 4.6,11 3.4,9.6 L1,9.6 Z" fill="#b8b8ce"/>
<path d="M1.6,2 L4.2,2 M1.6,4 L6.2,4 M1.6,6 L5,6 M1.6,8 L4,8" stroke="#f6f6fc" stroke-width="0.8"/>
<path d="M6.4,4.4 L9,4.4 L9,9 L6.4,9 Z" fill="#d4d4e4"/>
<path d="M2,10.4 L9.8,10.4 M10.2,3 L10.2,10" stroke="#f8f8ff" stroke-width="0.6"/>
</g>
<g transform="translate(521.5,26)" opacity="0.95">
<path d="M1,1 L5,1 L5,2.6 L9.6,2.6 L9.6,9.6 C8,11 4.6,11 3.4,9.6 L1,9.6 Z" fill="#b8b8ce"/>
<path d="M1.6,2 L4.2,2 M1.6,4 L6.2,4 M1.6,6 L5,6 M1.6,8 L4,8" stroke="#f6f6fc" stroke-width="0.8"/>
<path d="M6.4,4.4 L9,4.4 L9,9 L6.4,9 Z" fill="#d4d4e4"/>
<path d="M2,10.4 L9.8,10.4 M10.2,3 L10.2,10" stroke="#f8f8ff" stroke-width="0.6"/>
</g>
<rect x="546.1" y="26.9" width="32.1" height="11.2" fill="#ffffff" stroke="#b4b4c4" stroke-width="0.5"/>
<rect x="549.6" y="28.8" width="16.8" height="7.2" fill="#ffff00" stroke="#c8c8a0" stroke-width="0.3"/>
<path d="M572,31.6 L574,33.6 L576,31.6" stroke="#404048" stroke-width="0.6" fill="none"/>
<rect x="580.6" y="26.9" width="32.6" height="11.2" fill="#dcdcde" stroke="#b4b4c4" stroke-width="0.5"/>
<text x="583" y="34.60" font-size="6.3" fill="#181820" textLength="13" lengthAdjust="spacingAndGlyphs" >Auto</text>
<path d="M607,31.6 L609,33.6 L611,31.6" stroke="#404048" stroke-width="0.6" fill="none"/>
<rect x="615.7" y="26.9" width="32.5" height="11.2" fill="#ffffff" stroke="#b4b4c4" stroke-width="0.5"/>
<text x="618.5" y="34.60" font-size="6.3" fill="#181820" textLength="13" lengthAdjust="spacingAndGlyphs" >Auto</text>
<path d="M642.5,31.6 L644.5,33.6 L646.5,31.6" stroke="#404048" stroke-width="0.6" fill="none"/>
<rect x="650.3" y="26.9" width="32.8" height="11.2" fill="#ffffff" stroke="#b4b4c4" stroke-width="0.5"/>
<path d="M653.4,32.5 L660.2,32.5 M664.2,32.5 L666.6,32.5 M670.4,32.5 L672.8,32.5" stroke="#202028" stroke-width="0.7"/>
<path d="M677.6,31.6 L679.6,33.6 L681.6,31.6" stroke="#404048" stroke-width="0.6" fill="none"/>
<rect x="685.4" y="26.9" width="21.6" height="11.2" fill="#ffffff" stroke="#b4b4c4" stroke-width="0.5"/>
<text x="688" y="34.60" font-size="6.3" fill="#181820" textLength="9.6" lengthAdjust="spacingAndGlyphs" >Aut</text>
<path d="M700.5,31.6 L702.5,33.6 L704.5,31.6" stroke="#404048" stroke-width="0.6" fill="none"/>
<rect x="709" y="26.9" width="20" height="11.2" fill="#e4e4ee" stroke="#c8c8d8" stroke-width="0.5"/>
<text x="711" y="34.60" font-size="6.3" fill="#a4a4b0" textLength="9.4" lengthAdjust="spacingAndGlyphs" >Aut</text>
<path d="M723.7,31.6 L725.7,33.6 L727.7,31.6" stroke="#a0a0ac" stroke-width="0.6" fill="none"/>
<rect x="731" y="26.9" width="34" height="11.2" fill="#ffffff" stroke="#b4b4c4" stroke-width="0.5"/>
<text x="733.5" y="34.60" font-size="6.3" fill="#181820" textLength="14" lengthAdjust="spacingAndGlyphs" >None</text>
<path d="M758,31.6 L760,33.6 L762,31.6" stroke="#404048" stroke-width="0.6" fill="none"/>
<g>
<path d="M766.3,31.9 L769.8,30.6 L773.4,35.6 L767,36.9 C766.4,35.4 766.2,33.4 766.3,31.9 Z" fill="#2090f4"/>
<path d="M769.2,30.4 L773.2,28.3 L776.3,32.7 L772.6,35.3 Z" fill="#fcfcf4" stroke="#202030" stroke-width="0.5"/>
<path d="M770.6,29.8 L773.8,34.4 M772,29 L775.2,33.6" stroke="#e8d820" stroke-width="0.8"/>
<path d="M774.4,29.4 L777.6,27.6" stroke="#101878" stroke-width="2"/>
</g>
<g>
<path d="M786.4,28.2 C788,26.4 790.6,26.2 792,27.6" stroke="#f8c8a8" stroke-width="1" fill="none"/>
<path d="M787.6,28.6 L791.8,32.2" stroke="#182078" stroke-width="1.5"/>
<path d="M787.2,28.2 L788.6,29.4" stroke="#f08020" stroke-width="1.5"/>
<circle cx="785" cy="33.3" r="3.3" fill="url(#ball)"/>
</g>
</g>
<g id="righttb" font-family="Liberation Sans, sans-serif">
<path d="M782.8,45 L791.4,45" stroke="#ffffff" stroke-width="0.9"/><path d="M783,45.8 L791.6,45.8" stroke="#a4a4bc" stroke-width="0.6"/>
<path d="M782.8,69.6 L791.4,69.6" stroke="#ffffff" stroke-width="0.9"/><path d="M783,70.39999999999999 L791.6,70.39999999999999" stroke="#a4a4bc" stroke-width="0.6"/>
<path d="M782.8,94.7 L791.4,94.7" stroke="#ffffff" stroke-width="0.9"/><path d="M783,95.5 L791.6,95.5" stroke="#a4a4bc" stroke-width="0.6"/>
<path d="M782.8,119.7 L791.4,119.7" stroke="#ffffff" stroke-width="0.9"/><path d="M783,120.5 L791.6,120.5" stroke="#a4a4bc" stroke-width="0.6"/>
<path d="M782.8,144.3 L791.4,144.3" stroke="#ffffff" stroke-width="0.9"/><path d="M783,145.10000000000002 L791.6,145.10000000000002" stroke="#a4a4bc" stroke-width="0.6"/>
<path d="M782.8,222 L791.4,222" stroke="#ffffff" stroke-width="0.9"/><path d="M783,222.8 L791.6,222.8" stroke="#a4a4bc" stroke-width="0.6"/>
<path d="M782.8,260.7 L791.4,260.7" stroke="#ffffff" stroke-width="0.9"/><path d="M783,261.5 L791.6,261.5" stroke="#a4a4bc" stroke-width="0.6"/>
<path d="M782.8,339.6 L791.4,339.6" stroke="#ffffff" stroke-width="0.9"/><path d="M783,340.40000000000003 L791.6,340.40000000000003" stroke="#a4a4bc" stroke-width="0.6"/>
<path d="M781,164.4 L800,164.4" stroke="#a8a8c0" stroke-width="0.6"/><path d="M781,165.1 L800,165.1" stroke="#fafaff" stroke-width="0.6"/>
<path d="M781,199 L800,199" stroke="#a8a8c0" stroke-width="0.6"/><path d="M781,199.7 L800,199.7" stroke="#fafaff" stroke-width="0.6"/>
<path d="M785,52.4 L797.3,56.3 L785,60.7 Z" fill="#a4dcc4"/><g transform="translate(790.4,54.4)"><rect x="-0.9" y="-4.2" width="1.8" height="2" fill="#303034" transform="rotate(0)"/><rect x="-0.9" y="-4.2" width="1.8" height="2" fill="#303034" transform="rotate(45)"/><rect x="-0.9" y="-4.2" width="1.8" height="2" fill="#303034" transform="rotate(90)"/><rect x="-0.9" y="-4.2" width="1.8" height="2" fill="#303034" transform="rotate(135)"/><rect x="-0.9" y="-4.2" width="1.8" height="2" fill="#303034" transform="rotate(180)"/><rect x="-0.9" y="-4.2" width="1.8" height="2" fill="#303034" transform="rotate(225)"/><rect x="-0.9" y="-4.2" width="1.8" height="2" fill="#303034" transform="rotate(270)"/><rect x="-0.9" y="-4.2" width="1.8" height="2" fill="#303034" transform="rotate(315)"/><circle r="3.3" fill="#9c9ca0" stroke="#303034" stroke-width="0.8"/><circle r="1.5" fill="#d8f0ec" stroke="#404048" stroke-width="0.6"/></g>
<path d="M788.6,76.6 L794.8,83.2 L791.8,83.4 L793.2,86.6 L791.8,87.2 L790.4,84 L788.6,85.8 Z" fill="#fff6ea" stroke="#f08018" stroke-width="1" stroke-linejoin="round"/>
<path d="M795.8,86.6 L799.0,86.6 L797.4,88.39999999999999 Z" fill="#101010"/>
<g transform="translate(785.3,101.5)">
<path d="M1.2,1.6 L9.6,1.6 L10.6,9 L0.2,9 Z" fill="#fcfcff" stroke="#182068" stroke-width="0.7"/>
<path d="M0.2,9.4 L10.6,9.4" stroke="#182068" stroke-width="0.9"/>
<path d="M3,6.6 C3.6,4.6 5,5 4.6,6.8 C5.6,7.4 6.4,6.4 6.6,5.6" stroke="#30b050" stroke-width="0.7" fill="none"/>
<path d="M8.4,0.2 L4.4,6.8" stroke="#182068" stroke-width="1.3"/>
<path d="M8,1.4 L5.4,5.6" stroke="#e8c830" stroke-width="0.6"/>
</g>
<path d="M795.6,112.2 L798.8000000000001,112.2 L797.2,114.0 Z" fill="#101010"/>
<g transform="translate(784.7,126.3)">
<path d="M0.6,3 L4.6,1.2 L8.6,2.4 L8.6,7.2 L4.4,9.2 L0.6,7.6 Z" fill="#d8d048" stroke="#202c2c" stroke-width="0.6"/>
<path d="M0.6,3 L4.6,1.2 L8.6,2.4 L4.4,4.4 Z" fill="#1c6c68"/>
<path d="M4.4,4.4 L8.6,2.4 L8.6,7.2 L4.4,9.2 Z" fill="#208c80"/>
<path d="M1.4,4.8 L3.6,5.6 L3.6,8 L1.4,7.2 Z" fill="#fffff0"/>
<path d="M5.4,5 L7.8,4 L7.8,6.6 L5.4,7.6 Z" fill="#58c8b8"/>
<rect x="7.4" y="0.2" width="3.6" height="3.2" fill="#e8e060" stroke="#686828" stroke-width="0.5"/>
</g>
<path d="M796,137 L799.2,137 L797.6,138.8 Z" fill="#101010"/>
<g transform="translate(784.4,150)">
<rect x="0.8" y="0.8" width="3.6" height="8" rx="1.6" fill="#dcdcec" stroke="#707090" stroke-width="0.5"/>
<ellipse cx="2.6" cy="1.6" rx="1.8" ry="1" fill="#f4f4fc" stroke="#707090" stroke-width="0.4"/>
<rect x="7" y="3" width="3.8" height="7" rx="1.6" fill="#2868e8" stroke="#102060" stroke-width="0.5"/>
<ellipse cx="8.9" cy="3.8" rx="1.9" ry="1" fill="#88b8ff" stroke="#102060" stroke-width="0.4"/>
<path d="M4.6,8.6 L6.8,9.4" stroke="#404060" stroke-width="0.5"/>
</g>
<path d="M795.6,161.6 L798.8000000000001,161.6 L797.2,163.4 Z" fill="#101010"/>
<g transform="translate(785,170)">
<rect x="3.4" y="1.6" width="4" height="7.4" fill="#f0f060" stroke="#50a0a0" stroke-width="0.4"/>
<rect x="0.4" y="1" width="3.4" height="8" rx="1.5" fill="#2868e8" stroke="#102060" stroke-width="0.5"/>
<ellipse cx="2.1" cy="1.8" rx="1.7" ry="0.9" fill="#a8d0ff" stroke="#102060" stroke-width="0.4"/>
<rect x="7" y="2.4" width="3.4" height="8" rx="1.5" fill="#2868e8" stroke="#102060" stroke-width="0.5"/>
<ellipse cx="8.7" cy="3.2" rx="1.7" ry="0.9" fill="#a8d0ff" stroke="#102060" stroke-width="0.4"/>
</g>
<rect x="786.7" y="185.6" width="1.7" height="1.8" rx="0.5" fill="#3030e0"/><rect x="786.7" y="188.0" width="1.7" height="1.8" rx="0.5" fill="#3030e0"/><rect x="786.7" y="190.4" width="1.7" height="1.8" rx="0.5" fill="#3030e0"/><rect x="786.7" y="192.8" width="1.7" height="1.8" rx="0.5" fill="#3030e0"/><rect x="789.0" y="185.6" width="1.7" height="1.8" rx="0.5" fill="#3030e0"/><rect x="789.0" y="188.0" width="1.7" height="1.8" rx="0.5" fill="#3030e0"/><rect x="789.0" y="190.4" width="1.7" height="1.8" rx="0.5" fill="#3030e0"/><rect x="789.0" y="192.8" width="1.7" height="1.8" rx="0.5" fill="#3030e0"/><rect x="791.3" y="185.6" width="1.7" height="1.8" rx="0.5" fill="#3030e0"/><rect x="791.3" y="188.0" width="1.7" height="1.8" rx="0.5" fill="#3030e0"/><rect x="791.3" y="190.4" width="1.7" height="1.8" rx="0.5" fill="#3030e0"/><rect x="791.3" y="192.8" width="1.7" height="1.8" rx="0.5" fill="#3030e0"/><rect x="793.6" y="185.6" width="1.7" height="1.8" rx="0.5" fill="#3030e0"/><rect x="793.6" y="188.0" width="1.7" height="1.8" rx="0.5" fill="#3030e0"/><rect x="793.6" y="190.4" width="1.7" height="1.8" rx="0.5" fill="#3030e0"/><rect x="793.6" y="192.8" width="1.7" height="1.8" rx="0.5" fill="#3030e0"/>
<path d="M796,196 L799.2,196 L797.6,197.8 Z" fill="#101010"/>
<g transform="translate(790.7,209.4)">
<path d="M-4.6,-2.6 L-4.6,-4.6 L-2.6,-4.6 M4.6,-2.6 L4.6,-4.6 L2.6,-4.6 M-4.6,2.6 L-4.6,4.6 L-2.6,4.6 M4.6,2.6 L4.6,4.6 L2.6,4.6" stroke="#202028" stroke-width="1" fill="none"/>
<circle r="2.6" fill="#68c078" stroke="#285838" stroke-width="0.6"/><circle r="1.2" fill="#f4f8d0"/>
</g>
<path d="M796,216 L799.2,216 L797.6,217.8 Z" fill="#101010"/>
<g transform="translate(785,229)">
<path d="M0.6,0.6 L7,0.6 L7,3 L10,3 L10,10.6 L4,10.6 L4,7.6 L0.6,7.6 Z" fill="#d0d0e0" stroke="#b0b0c8" stroke-width="0.6"/>
<path d="M1.4,3.4 L6.4,3.4 M4.6,5.4 L9.4,5.4 M7.4,3.4 L7.4,10" stroke="#f6f6fc" stroke-width="0.7"/>
</g>
<g transform="translate(785,243.3)">
<path d="M0.4,1.4 L1.8,0.2 L10.4,0.2 L10.4,9.2 L9,10.4 L0.4,10.4 Z" fill="#385860" stroke="#283840" stroke-width="0.4"/>
<rect x="1" y="2" width="7.6" height="7.8" fill="#58d4f4" stroke="#184858" stroke-width="0.5"/>
<path d="M1,2 L2.2,0.8 L10,0.8 L8.6,2 Z" fill="#a8ecfc"/>
<path d="M9.4,2 L9.4,9.4 M0.8,10 L9,10" stroke="#d8d070" stroke-width="0.6"/>
</g>
<circle cx="790.7" cy="272.2" r="1.1" fill="#101868"/>
<path d="M786.2,290.8 L795.6,282.2" stroke="#182078" stroke-width="1"/>
<path d="M785.6,304.4 L789.2,300.6 L796,300.2 L792.4,304.2 Z" fill="#f0e860" stroke="#182068" stroke-width="0.6" stroke-linejoin="round"/>
<text x="787.6" y="352" font-size="4.6" font-weight="bold" fill="#182078" textLength="8.4" lengthAdjust="spacingAndGlyphs">ABC</text><path d="M787.4,353 L796,353" stroke="#182078" stroke-width="0.5"/><path d="M786.8,354.2 L788.4,353" stroke="#182078" stroke-width="0.5"/><circle cx="786.7" cy="354.4" r="0.8" fill="#182078"/>
<path d="M796,356.8 L799.2,356.8 L797.6,358.6 Z" fill="#101010"/>
<path d="M789,363 C790,362 794,362 795.2,363 C796.4,364.4 796.4,366 795.2,367.2 C794,368 790.4,368 789.4,367.2 L788,365.2 Z" fill="#fcfcff" stroke="#182078" stroke-width="0.6"/><path d="M788.2,366.4 L786.8,368.8" stroke="#182078" stroke-width="0.5"/><circle cx="786.7" cy="369.2" r="0.8" fill="#182078"/>
<path d="M796,372.6 L799.2,372.6 L797.6,374.40000000000003 Z" fill="#101010"/>
<g transform="translate(785.5,376.7)">
<path d="M0.2,7.8 L3.6,5 L11,6.4 L7.6,9.6 Z" fill="#f0d840" stroke="#c04020" stroke-width="0.5"/>
<path d="M0.2,7.8 L7.6,9.6 L11,6.4 L11,8.2 L7.6,11.4 L0.2,9.6 Z" fill="#20b8c8"/>
<path d="M3.4,7.4 L5.6,4.4 L7.6,7.8 Z" fill="#e02818"/>
<circle cx="5.6" cy="2.4" r="2.1" fill="#fff4f4" stroke="#e02818" stroke-width="0.8"/>
<path d="M5.6,4.4 L5.6,6.4" stroke="#e02818" stroke-width="0.8"/>
</g>
</g>
<g id="bottb" font-family="Liberation Sans, sans-serif">
<path d="M4,420.4 L4,428.8" stroke="#ffffff" stroke-width="0.9"/><path d="M4.8,420.7 L4.8,429.1" stroke="#a8a8c0" stroke-width="0.7"/>
<path d="M162,420.4 L162,428.8" stroke="#ffffff" stroke-width="0.9"/><path d="M162.8,420.7 L162.8,429.1" stroke="#a8a8c0" stroke-width="0.7"/>
<path d="M272.5,420.4 L272.5,428.8" stroke="#ffffff" stroke-width="0.9"/><path d="M273.3,420.7 L273.3,429.1" stroke="#a8a8c0" stroke-width="0.7"/>
<path d="M459.4,420.4 L459.4,428.8" stroke="#ffffff" stroke-width="0.9"/><path d="M460.2,420.7 L460.2,429.1" stroke="#a8a8c0" stroke-width="0.7"/>
<path d="M483.7,420.4 L483.7,428.8" stroke="#ffffff" stroke-width="0.9"/><path d="M484.5,420.7 L484.5,429.1" stroke="#a8a8c0" stroke-width="0.7"/>
<path d="M537.7,420.4 L537.7,428.8" stroke="#ffffff" stroke-width="0.9"/><path d="M538.5,420.7 L538.5,429.1" stroke="#a8a8c0" stroke-width="0.7"/>
<path d="M562,420.4 L562,428.8" stroke="#ffffff" stroke-width="0.9"/><path d="M562.8,420.7 L562.8,429.1" stroke="#a8a8c0" stroke-width="0.7"/>
<path d="M630.4,420.4 L630.4,428.8" stroke="#ffffff" stroke-width="0.9"/><path d="M631.1999999999999,420.7 L631.1999999999999,429.1" stroke="#a8a8c0" stroke-width="0.7"/>
<path d="M654.4,420.4 L654.4,428.8" stroke="#ffffff" stroke-width="0.9"/><path d="M655.1999999999999,420.7 L655.1999999999999,429.1" stroke="#a8a8c0" stroke-width="0.7"/>
<g transform="translate(11,424.4)"><path d="M0.8,1 L6.2,1 L8.8,3.4 L8.8,9.8 L0.8,9.8 Z" fill="#8c8c98"/><path d="M0.2,0.3 L5.8,0.3 L8.2,2.6 L8.2,9.2 L0.2,9.2 Z" fill="#ffffc4"/><path d="M5.8,0.3 L5.8,2.6 L8.2,2.6 Z" fill="#d8d8c0"/></g>
<g transform="translate(24.5,424.3)"><path d="M0.6,2.2 L2,1 L4.4,1 L5.2,2.2 L8,2.2 L8,8.6 L0.6,8.6 Z" fill="#d8a800" stroke="#584c08" stroke-width="0.6"/><path d="M0.8,8.6 L2.8,4.2 L10.4,4.2 L8.2,8.6 Z" fill="#ffc820" stroke="#584c08" stroke-width="0.6"/><path d="M7.6,1.6 L9.6,0.2 M9.6,0.2 L9.8,1.8 M9.6,0.2 L8,0.2" stroke="#383828" stroke-width="0.6" fill="none"/></g>
<g transform="translate(39.5,424)"><rect x="0.3" y="0.3" width="9.2" height="9.6" rx="0.8" fill="#b4b41c" stroke="#303008" stroke-width="0.7"/><rect x="2.2" y="0.6" width="5.2" height="3.8" fill="#f4f8ff"/><rect x="5.4" y="0.8" width="1.6" height="3" fill="#5878e0"/><rect x="2.4" y="6" width="5.2" height="3.8" fill="#080808"/><rect x="5.8" y="6.8" width="1.4" height="2.4" fill="#e8e8e8"/></g>
<g transform="translate(53.5,424.3)"><path d="M3,3.6 L4.6,0.4 L9.6,0.4 L8.4,3.6 Z" fill="#b8d8ff" stroke="#384878" stroke-width="0.4"/><path d="M0.4,5 L2.6,3.4 L9.2,3.4 L10.4,5 L10.4,8 L9,9.6 L1.6,9.6 L0.4,8 Z" fill="#a8a820" stroke="#303008" stroke-width="0.6"/><path d="M1.2,6.4 L9.6,6.4" stroke="#e8e8a0" stroke-width="0.8"/><path d="M2,8.2 L8.6,8.2" stroke="#404010" stroke-width="0.7"/><rect x="7.4" y="6.9" width="1.4" height="0.9" fill="#30e030"/></g>
<g transform="translate(69,424)" stroke="#bcbccc" fill="none"><path d="M1.6,0.4 L6,6.8 M7,0.4 L2.6,6.8" stroke-width="1.1"/><ellipse cx="2" cy="8" rx="1.5" ry="1.7" stroke-width="0.9"/><ellipse cx="6.6" cy="8" rx="1.5" ry="1.7" stroke-width="0.9"/><path d="M2.2,0.6 L6.4,6.8" stroke="#f4f4fc" stroke-width="0.5"/></g>
<g transform="translate(82.5,424)"><path d="M0.4,0.4 L4.4,0.4 L6,2 L6,7 L0.4,7 Z" fill="#d4d4e2" stroke="#b4b4c8" stroke-width="0.7"/><path d="M4,3 L8.2,3 L10,4.8 L10,10 L4,10 Z" fill="#dcdcea" stroke="#b4b4c8" stroke-width="0.7"/><path d="M5.2,6 L8.6,6 M5.2,7.8 L8.6,7.8" stroke="#f4f4fc" stroke-width="0.6"/></g>
<g transform="translate(97,423.6)"><rect x="0.4" y="1.4" width="8" height="8" rx="0.8" fill="#a09820" stroke="#383408" stroke-width="0.7"/><path d="M2.4,1.6 C2.6,0 6.2,0 6.4,1.6 L7,2.4 L1.8,2.4 Z" fill="#f0c820" stroke="#504808" stroke-width="0.4"/><rect x="1.6" y="3.4" width="5.4" height="4.6" fill="#c0b838"/><path d="M5,5.6 L8.6,5.6 L10.2,7 L10.2,10.6 L5,10.6 Z" fill="#f0f4ff" stroke="#203088" stroke-width="0.6"/><path d="M6,8.4 L9.2,8.4 M6,9.6 L9.2,9.6" stroke="#2848d0" stroke-width="0.6"/></g>
<g transform="translate(112,424.2)"><path d="M6.6,8.4 C10.4,6.4 10.2,1.4 6,1.2 C4,1.2 2.6,2.2 2,3.8" stroke="#0c6838" stroke-width="2.7" fill="none"/><path d="M6.6,8.4 C10.4,6.4 10.2,1.4 6,1.2 C4,1.2 2.6,2.2 2,3.8" stroke="#2ccc6c" stroke-width="1.6" fill="none"/><path d="M0.2,3 L4.8,4 L1.2,7.2 Z" fill="#2ccc6c" stroke="#0c6838" stroke-width="0.6" stroke-linejoin="round"/></g>
<path d="M122.2,434.2 L125.4,434.2 L123.8,436.0 Z" fill="#101010"/>
<g transform="translate(127,424.2)"><path d="M4.4,8.4 C0.6,6.4 0.8,1.4 5,1.2 C7,1.2 8.4,2.2 9,3.8" stroke="#c4c4d6" stroke-width="2.3" fill="none"/><path d="M10.8,3 L6.2,4 L9.8,7.2 Z" fill="#c4c4d6"/><path d="M4.6,8.6 C1.6,6.6 1.6,3 3.6,1.8" stroke="#f6f6fd" stroke-width="0.6" fill="none"/></g>
<path d="M137.8,434.2 L141.0,434.2 L139.4,436.0 Z" fill="#101010"/>
<g transform="translate(143,423.6)"><path d="M0.6,1 L5.6,6.2 L3.6,6.4 L4.6,9.4 L3.4,10 L2.2,7 L0.6,8.6 Z" fill="#f4e840" stroke="#8c8420" stroke-width="0.5"/><text x="4.4" y="9.4" font-size="10.5" font-weight="bold" fill="#141878" textLength="6" lengthAdjust="spacingAndGlyphs">?</text></g>
<text x="167.8" y="432" font-size="10.5" font-style="italic" font-family="Liberation Serif, serif" fill="#080808">f</text><text x="172.4" y="432.6" font-size="5" font-weight="bold" fill="#080808" textLength="6.4" lengthAdjust="spacingAndGlyphs">(x)</text>
<g transform="translate(182,423.4)"><path d="M5.6,0.4 C9,0.4 10.8,2.2 10.8,4 C10.8,6.2 8.4,7.8 5,7.6 L1.4,10 L2.4,7 C0.8,6.2 0.2,5 0.2,4 C0.2,2 2.4,0.4 5.6,0.4 Z" fill="#d0d0d8" stroke="#181818" stroke-width="0.8" stroke-linejoin="round"/><path d="M3,4.6 C4,2.6 6,2.4 7.8,3 M4,5.6 C5.6,5.8 7,5 8,4" stroke="#686870" stroke-width="0.6" fill="none"/></g>
<g fill="#d0d0dc" stroke="#c0c0d0" stroke-width="0.4"><circle cx="200.2" cy="426" r="1.6"/><circle cx="200.2" cy="430.8" r="1.6"/></g><path d="M200.2,426.6 L200.2,430.2" stroke="#f0f0f8" stroke-width="0.8"/>
<g transform="translate(209,424)"><rect x="0" y="0" width="9" height="8.6" fill="#484858"/><rect x="0" y="0" width="9" height="2.2" fill="#1414e4"/><path d="M0,4.4 L9,4.4 M0,6.5 L9,6.5 M3,2.2 L3,8.6 M6,2.2 L6,8.6" stroke="#787888" stroke-width="0.4"/></g>
<path d="M218.8,434.2 L222.0,434.2 L220.4,436.0 Z" fill="#101010"/>
<g transform="translate(224,424)"><path d="M2.6,5 L9,1.4 M2.6,5 L9,5.4 M2.6,5 L9,9.2" stroke="#383848" stroke-width="0.5"/><path d="M7.4,1.6 L7.4,9.4" stroke="#e02020" stroke-width="0.6" stroke-dasharray="0.8 0.8"/><circle cx="9.4" cy="1.6" r="1.5" fill="#4868ff"/><circle cx="9.4" cy="5.4" r="1.5" fill="#4868ff"/><circle cx="9.4" cy="9.2" r="1.5" fill="#4868ff"/><rect x="0.2" y="3.6" width="3" height="2.8" rx="1" fill="#f0d840" stroke="#186888" stroke-width="0.6"/></g>
<g transform="translate(240,422.6)"><path d="M2,5 L2,3.2 C2,0 7,0 7,3.2 L7,5" stroke="#3c3c44" stroke-width="1.4" fill="none"/><rect x="0.4" y="4.6" width="8" height="6.2" rx="0.8" fill="#6c6c74" stroke="#202024" stroke-width="0.6"/><path d="M1.4,5.6 L1.4,10 M3,5.4 L3,10.2" stroke="#9c9ca8" stroke-width="0.7"/><circle cx="5.4" cy="7.4" r="0.9" fill="#18181c"/></g>
<path d="M248.7,434.2 L251.89999999999998,434.2 L250.29999999999998,436.0 Z" fill="#101010"/>
<g transform="translate(254.5,423.6)"><rect x="0.4" y="0.4" width="3.8" height="2.4" fill="#e8d830" stroke="#187888" stroke-width="0.5"/><rect x="0.4" y="3.8" width="3.8" height="2.4" fill="#20a8a8" stroke="#187888" stroke-width="0.5"/><rect x="0.4" y="7.2" width="3.8" height="2.4" fill="#e8d830" stroke="#187888" stroke-width="0.5"/><path d="M5,0.4 C7.4,0.6 6,4.6 7.8,5 C6,5.4 7.4,9.6 5,9.8" stroke="#8c8c98" stroke-width="0.9" fill="none"/><path d="M8.6,5 L9.8,5" stroke="#8c8c98" stroke-width="1"/></g>
<g transform="translate(279,424.2)"><path d="M0.8,0.8 L2.4,0.4 L5.2,3.6 L8.6,2.2 C9.8,1.8 10.2,2.8 9.4,3.4 L6.6,5.2 L9.4,7.8 L8.6,8.8 L5,6.8 L2.8,9 L1.8,8.6 L3,5.6 L1.4,4.4 L0.4,2 Z" fill="#30d4ec" stroke="#182c78" stroke-width="0.7" stroke-linejoin="round"/><path d="M2.4,2 L7.4,6.6" stroke="#a8f0fc" stroke-width="0.6"/></g>
<g transform="translate(293.5,424.5)"><rect x="0.3" y="0.3" width="9.2" height="8.6" fill="#f2f29c" stroke="#38c0d0" stroke-width="0.7"/>
<g fill="#101010"><path d="M4.1,3.9 L1.9,3.5 L3.7,1.7 Z"/><path d="M5.7,3.9 L7.9,3.5 L6.1,1.7 Z"/><path d="M4.1,5.3 L1.9,5.7 L3.7,7.5 Z"/><path d="M5.7,5.3 L7.9,5.7 L6.1,7.5 Z"/></g>
<g stroke="#101010" stroke-width="0.8"><path d="M1,1 L2.8,2.6 M8.8,1 L7,2.6 M1,8.2 L2.8,6.6 M8.8,8.2 L7,6.6"/></g>
<circle cx="4.9" cy="4.6" r="0.7" fill="#101010"/></g>
<g transform="translate(313,428.8)" fill="#141c70"><path d="M0,-5 L2,-2.6 L-2,-2.6 Z"/><path d="M0,5 L2,2.6 L-2,2.6 Z"/><path d="M-5,0 L-2.6,-2 L-2.6,2 Z"/><path d="M5,0 L2.6,-2 L2.6,2 Z"/><rect x="-0.6" y="-3" width="1.2" height="6"/><rect x="-3" y="-0.6" width="6" height="1.2"/><circle r="1.3"/><circle r="0.5" fill="#a0c0ff"/></g>
<g transform="translate(322,424.6)"><rect x="0.2" y="1.6" width="1.4" height="5" fill="#182478"/><path d="M1.6,2 C3,0.6 6,0 8.6,1.2 C10.4,2 10.8,3.6 9.6,4.4 L6,5.4 L1.6,6.2 Z" fill="#f2c4a4" stroke="#784838" stroke-width="0.5"/><path d="M4,2.8 C5.6,2 7.4,2.2 8.6,3" stroke="#784838" stroke-width="0.5" fill="none"/><circle cx="7.2" cy="6.6" r="2.6" fill="#2894ff"/><path d="M5.4,5.4 C6.4,4.6 8,4.6 9,5.4" stroke="#a8e0ff" stroke-width="0.7" fill="none"/></g>
<g transform="translate(340.6,427)"><path d="M2.4,2.4 L7,6.6" stroke="#182868" stroke-width="1.8"/><path d="M2.6,2.4 L6.8,6.2" stroke="#38a8c8" stroke-width="0.7"/><circle r="3.1" fill="#f8fcff" stroke="#182868" stroke-width="0.9"/><path d="M-1.6,0 L1.6,0" stroke="#101010" stroke-width="1"/><path d="M0,-1.6 L0,1.6" stroke="#101010" stroke-width="1"/></g>
<g transform="translate(355,427)"><path d="M2.4,2.4 L7,6.6" stroke="#182868" stroke-width="1.8"/><path d="M2.6,2.4 L6.8,6.2" stroke="#38a8c8" stroke-width="0.7"/><circle r="3.1" fill="#f8fcff" stroke="#182868" stroke-width="0.9"/><path d="M-1.6,0 L1.6,0" stroke="#101010" stroke-width="1"/></g>
<g transform="translate(365.6,423.4)"><path d="M0.4,8.6 L4,5.4 L11.2,6.4 L7.6,9.8 Z" fill="#38b4c8" stroke="#182c78" stroke-width="0.5"/><path d="M5.6,7.6 L5.6,2" stroke="#c89858" stroke-width="1"/><path d="M4,3 L5.6,0.2 L7.2,3 Z" fill="#182c78"/></g>
<g transform="translate(380.6,424)"><rect x="0" y="0" width="9.6" height="9" fill="#3848e0"/><rect x="0.7" y="0.7" width="3.7" height="3.4" fill="#24e4ff"/><rect x="5.2" y="0.7" width="3.7" height="3.4" fill="#7858e8"/><rect x="0.7" y="4.9" width="3.7" height="3.4" fill="#24e4ff"/><rect x="5.2" y="4.9" width="3.7" height="3.4" fill="#24e4ff"/></g>
<g transform="translate(395,423)" stroke="#3050f0" stroke-width="0.6" stroke-linejoin="round"><path d="M0.4,3.6 L3.6,0.4 L10.4,0.4 L10.4,7 L7.2,10.2 L0.4,10.2 Z" fill="#48e8ff"/><path d="M0.4,3.6 L7.2,3.6 L7.2,10.2 M7.2,3.6 L10.4,0.4" fill="none"/><path d="M0.8,3.2 L3.8,0.8 L9.6,0.8 L7,3.2 Z" fill="#a0f4ff" stroke="none"/></g>
<path d="M405.2,434.2 L408.4,434.2 L406.8,436.0 Z" fill="#101010"/>
<g transform="translate(412,423.4)"><rect x="0.4" y="0.4" width="8" height="9.6" rx="2.6" fill="#94842c" stroke="#6c5c10" stroke-width="0.8"/><rect x="2" y="2.4" width="4.8" height="6.6" fill="#1434d8"/><ellipse cx="4.4" cy="2.6" rx="2.4" ry="1" fill="#40d0f0" stroke="#102080" stroke-width="0.3"/><ellipse cx="4.4" cy="9" rx="2.4" ry="0.8" fill="#1434d8"/><path d="M3,3.8 L3,8.6" stroke="#6088ff" stroke-width="0.6"/></g>
<path d="M420.4,433.8 L424.6,433.8 L422.5,436.4 Z" fill="#fcfcff"/>
<path d="M421,434.2 L424.2,434.2 L422.6,436.0 Z" fill="#101010"/>
<g transform="translate(427,424)"><rect x="0.3" y="0.3" width="8.8" height="8.6" fill="#38d0f0" stroke="#7c70b8" stroke-width="0.8"/><path d="M1.4,6.4 C2.6,3.4 5.4,2.2 7.8,3 L7.6,5.2 C5.6,4.8 3.6,5.8 2.6,7.6 Z" fill="#ece490" stroke="#5868a0" stroke-width="0.4"/><path d="M2.2,7.6 C3.6,6.6 5.6,6.2 7.4,6.4" stroke="#2438a0" stroke-width="1"/></g>
<g transform="translate(441,424)"><rect x="0.3" y="0.3" width="8.8" height="8.6" fill="#38d0f0" stroke="#7c70b8" stroke-width="0.8"/><path d="M1.4,6.4 C2.6,3.4 5.4,2.2 7.8,3 L7.6,5.2 C5.6,4.8 3.6,5.8 2.6,7.6 Z" fill="#ece490" stroke="#5868a0" stroke-width="0.4"/><path d="M2.2,7.6 C3.6,6.6 5.6,6.2 7.4,6.4" stroke="#2438a0" stroke-width="1"/></g>
<g transform="translate(465.6,423)"><circle cx="2" cy="1.8" r="1.5" fill="#20d0e0" stroke="#186878" stroke-width="0.3"/><path d="M3.6,1.4 C6.6,0.6 8.4,2 8.4,4.6" stroke="#2848e0" stroke-width="0.9" fill="none"/><path d="M7.2,4 L8.4,5.8 L9.4,4 Z" fill="#2848e0"/><path d="M4.6,2.2 L6.6,2.6" stroke="#e8d020" stroke-width="0.8"/><path d="M0.4,6.8 L2,5.2 L9.6,5.2 L9.6,9.2 L8.2,10.4 L0.4,10.4 Z" fill="#8c8c98" stroke="#202024" stroke-width="0.6"/><path d="M1.2,6.8 L2.4,5.8 L9,5.8 L7.8,6.8 Z" fill="#f4f4fa"/><rect x="1" y="7.4" width="7" height="2.4" fill="#b4b4c0" stroke="#303038" stroke-width="0.4"/></g>
<g transform="translate(490,423.4)"><path d="M1.4,2 L8.6,2" stroke="#2030c8" stroke-width="1.1"/><path d="M-0.2,2 L3,-0.2 L3,4.2 Z M10.2,2 L7,-0.2 L7,4.2 Z" fill="#2030c8"/><rect x="0.3" y="5.6" width="9.6" height="3.6" fill="#f4b888" stroke="#2858d0" stroke-width="0.7"/><path d="M1.8,6.4 L1.8,8.6 M3.6,6.4 L3.6,8.6 M5.4,6.4 L5.4,8.6 M7.2,6.4 L7.2,8.6 M8.8,6.8 L8.8,8.6" stroke="#582810" stroke-width="0.8"/></g>
<g transform="translate(505.6,423)"><path d="M2.4,1.2 L8,0.2 L8,10.4 L5.4,10.4 L5.4,7.6 L2.4,6.4 Z" fill="#3c3c44" stroke="#18181c" stroke-width="0.4"/><path d="M6.4,1 L6.4,10" stroke="#70707c" stroke-width="0.6"/><circle cx="2.2" cy="4" r="1.7" fill="#30c8e0"/><circle cx="2.6" cy="4.2" r="0.8" fill="#70f070"/></g>
<g transform="translate(521,423.4)"><circle cx="3.2" cy="1.6" r="1.2" fill="none" stroke="#383408" stroke-width="1"/><rect x="0.4" y="3" width="5.8" height="6.6" rx="1.4" fill="#b4a420" stroke="#484008" stroke-width="0.7"/><path d="M1.8,3.8 L1.8,8.6" stroke="#f0e878" stroke-width="0.8"/></g>
<g transform="translate(543.7,424.2)"><path d="M0.4,2.2 L2.6,2.2 L3.4,0.8 L7,0.8 L7.8,2.2 L10.4,2.2 L10.4,7.4 L0.4,7.4 Z" fill="#34343f" stroke="#14141c" stroke-width="0.5"/><path d="M0.6,2.4 L3,2.4 L3.6,1.2 L6.8,1.2 L7.4,2.4 L10.2,2.4 L10.2,3.4 L0.6,3.4 Z" fill="#b4b4c4"/><circle cx="5.4" cy="4.9" r="2.4" fill="#50506a" stroke="#101018" stroke-width="0.6"/><circle cx="5.4" cy="4.9" r="1.1" fill="#181828"/><circle cx="4.8" cy="4.2" r="0.5" fill="#c8c8e8"/><rect x="8.2" y="0.6" width="1.6" height="1.2" fill="#d0c060"/></g>
<g transform="translate(568,423)"><path d="M0.4,7.2 L4.6,4.4 L10,5 L10,7 L5.4,10.4 L0.4,9.2 Z" fill="#2038c0" stroke="#101850" stroke-width="0.4"/><path d="M0.4,7.2 L4.6,4.4 L10,5 L5.4,8.2 Z" fill="#28c8e0"/><path d="M5.6,8.2 L10,5.2 L10,6.8 L5.6,10 Z" fill="#d01828"/><path d="M4.6,6 L4.6,1.6" stroke="#e8d020" stroke-width="0.8"/><path d="M3.4,2.2 L4.6,0 L5.8,2.2 Z" fill="#f0e020"/><rect x="0" y="1.6" width="1.4" height="1.4" fill="#e02030"/></g>
<g transform="translate(583,423.4)"><path d="M0.6,3 C3,0.4 7.4,-0.2 9.8,1.6 C10,4.6 9.2,7.8 8,9.6 C6.6,7.6 3.4,7.4 1.6,9.2 C2,7 1.6,4.6 0.6,3 Z" fill="#20c8e8" stroke="#101c68" stroke-width="0.8" stroke-linejoin="round"/><path d="M3,3 C4.6,1.6 7,1.6 8.4,2.6 C8.4,4.6 8,6 7.2,7.4 C5.8,6.4 4.4,6.2 3.2,6.6 Z" fill="#f0e020"/><path d="M5.6,3 C6.6,2.6 7.6,3 8,3.6 L7.4,6 C6.6,5.6 5.8,5.4 5.2,5.4 Z" fill="#e82020"/><path d="M4.2,1.8 L3.4,8" stroke="#101c68" stroke-width="0.5"/></g>
<g transform="translate(597.5,422.2)"><rect x="0.3" y="0.3" width="9.6" height="9.6" rx="1.6" fill="#f2eaa4" stroke="#9c9478" stroke-width="0.5"/><circle cx="4.6" cy="4.8" r="3.2" fill="none" stroke="#182068" stroke-width="0.8"/><circle cx="4.6" cy="4.8" r="1.3" fill="none" stroke="#182068" stroke-width="0.6"/><path d="M4.6,0.8 L4.6,8.8 M0.8,4.8 L8.6,4.8" stroke="#182068" stroke-width="0.5"/><circle cx="7" cy="8" r="1.9" fill="#e8f4ff" stroke="#2050d0" stroke-width="0.7"/><path d="M8.4,9.4 L10.2,11.2" stroke="#2050d0" stroke-width="1"/></g>
<g transform="translate(613,423)"><path d="M0.6,2.4 L6.6,0.4 L9.4,1.6 L9.4,7.6 L3,10 L0.6,8.8 Z" fill="#18a0a0"/><path d="M0.6,2.4 L6.6,0.4 L9.4,1.6 L3.2,3.8 Z" fill="#30c8c0"/><path d="M0.6,4 L3.2,5.2 L9.4,3 L9.4,4.6 L3.2,6.8 L0.6,5.6 Z" fill="#e02028"/><path d="M0.6,5.8 L3.2,7 L9.4,4.8 L9.4,6.2 L3.2,8.4 L0.6,7.2 Z" fill="#e8d828"/></g>
<g transform="translate(636,423.4)"><path d="M3.6,2.2 L8.2,0.2 L10.6,1.8 L10.6,5 L7,6.2 Z" fill="#f4c4a0" stroke="#70483c" stroke-width="0.4"/><path d="M5.2,3 L9.4,1.2" stroke="#382820" stroke-width="1"/><path d="M8.2,4.8 L10.4,3.8 L10.4,5 L8.2,6 Z" fill="#585860"/><path d="M0.2,4.2 C0.2,2 3,1.6 5,2.6 C7,3.4 8.2,4.6 7.8,6.6 C7.4,9 5.4,10.2 3.4,9.8 C1.2,9.2 0.2,6.6 0.2,4.2 Z" fill="#f08420" stroke="#b04810" stroke-width="0.4"/><path d="M1.8,4.6 C3,6.6 5,6.8 6.4,5.4 M2.4,7 C3.6,8.4 5,8.4 6,7.6" stroke="#f8d838" stroke-width="0.9" fill="none"/></g>
<g transform="translate(660.6,423.4)"><path d="M0.6,4 L5,0.8 L8,2.6 L8.6,7 L4.4,10 L0.6,7.6 Z" fill="#a8a020" stroke="#383408" stroke-width="0.5"/><path d="M1.4,4.2 L5,1.6 L7.4,3 L3.8,5.8 Z" fill="#f4e860"/><path d="M2,7.2 L4.4,8.8 L7.8,6.2" stroke="#e8e080" stroke-width="0.7" fill="none"/><path d="M10.2,0.4 L5.2,5.6" stroke="#1838d8" stroke-width="1.1"/><path d="M5.2,5.6 L4.4,6.8" stroke="#181818" stroke-width="0.8"/></g>
<path d="M671.2,434.2 L674.4000000000001,434.2 L672.8000000000001,436.0 Z" fill="#101010"/>
<g transform="translate(676,423.2)"><path d="M0.4,1.4 L3.6,0.4 L5.4,1.6 L5,3.6 L2,4.4 L0.4,3 Z" fill="#a8a020" stroke="#383408" stroke-width="0.4"/><path d="M1.2,1.6 L3.6,1 L4.6,1.8 L2.2,2.8 Z" fill="#f4e860"/><path d="M6,1.2 C7.6,1.2 8.8,2.2 9.2,3.8" stroke="#2848e0" stroke-width="0.6" fill="none" stroke-dasharray="1 0.6"/><path d="M8.4,3.4 L9.4,4.8 L10,3.2 Z" fill="#2848e0"/><path d="M2.2,7.6 C2.6,5.6 7,4.6 10,5.6 C11,6.6 9.6,9 6.4,10 C4,10.4 2,9.4 2.2,7.6 Z" fill="#f0e040" stroke="#2848e0" stroke-width="0.6"/><path d="M4,7.8 C5.4,6.8 7.4,6.4 8.8,6.6" stroke="#b8a820" stroke-width="0.6" fill="none"/></g>
<path d="M687.4,434.2 L690.6,434.2 L689.0,436.0 Z" fill="#101010"/>
<g id="logo"><path d="M780.4,419.6 C782.4,418.6 784.6,419 784.4,420.6 C784.2,421.8 782.8,422.4 782,422.6 C783.2,422.8 783.8,423.6 783.2,424.4" stroke="#e02434" stroke-width="1" fill="none"/>
<path d="M777.6,430.6 L779.6,424.6 C782.4,424 783.6,425.6 782.8,427.6 C782,429.6 780,430.8 777.6,430.6 Z" fill="none" stroke="#5030a0" stroke-width="1.2"/>
<path d="M788,423.4 C786,422.6 784.2,423.4 784.2,424.8 C784.2,426.6 787.2,426.6 786.8,428.4 C786.4,429.8 784,430 782.6,429.4" stroke="#f0a020" stroke-width="1.2" fill="none"/>
<text x="779" y="434.2" font-size="4.4" font-weight="bold" font-style="italic" fill="#3c2890" textLength="16.6" lengthAdjust="spacingAndGlyphs">CATIA</text></g>
<rect x="770" y="441.4" width="4.4" height="3.6" fill="#e8e8f0" stroke="#a8a8b8" stroke-width="0.5"/><path d="M775.6,441 L775.6,446 L770.4,446" stroke="#b0b0c0" stroke-width="0.6" fill="none"/>
<ellipse cx="791" cy="444" rx="3.4" ry="2.6" fill="#f4f4f8" stroke="#101018" stroke-width="0.9"/><circle cx="791" cy="444" r="1.3" fill="#2878f0"/><path d="M795.2,441 L795.2,447 M787,447.2 L795.4,447.2" stroke="#101018" stroke-width="0.8"/>
<rect x="0" y="448.9" width="800" height="1.1" fill="#242c40"/>
</g>
</g>
</svg>
</body>
</html>
